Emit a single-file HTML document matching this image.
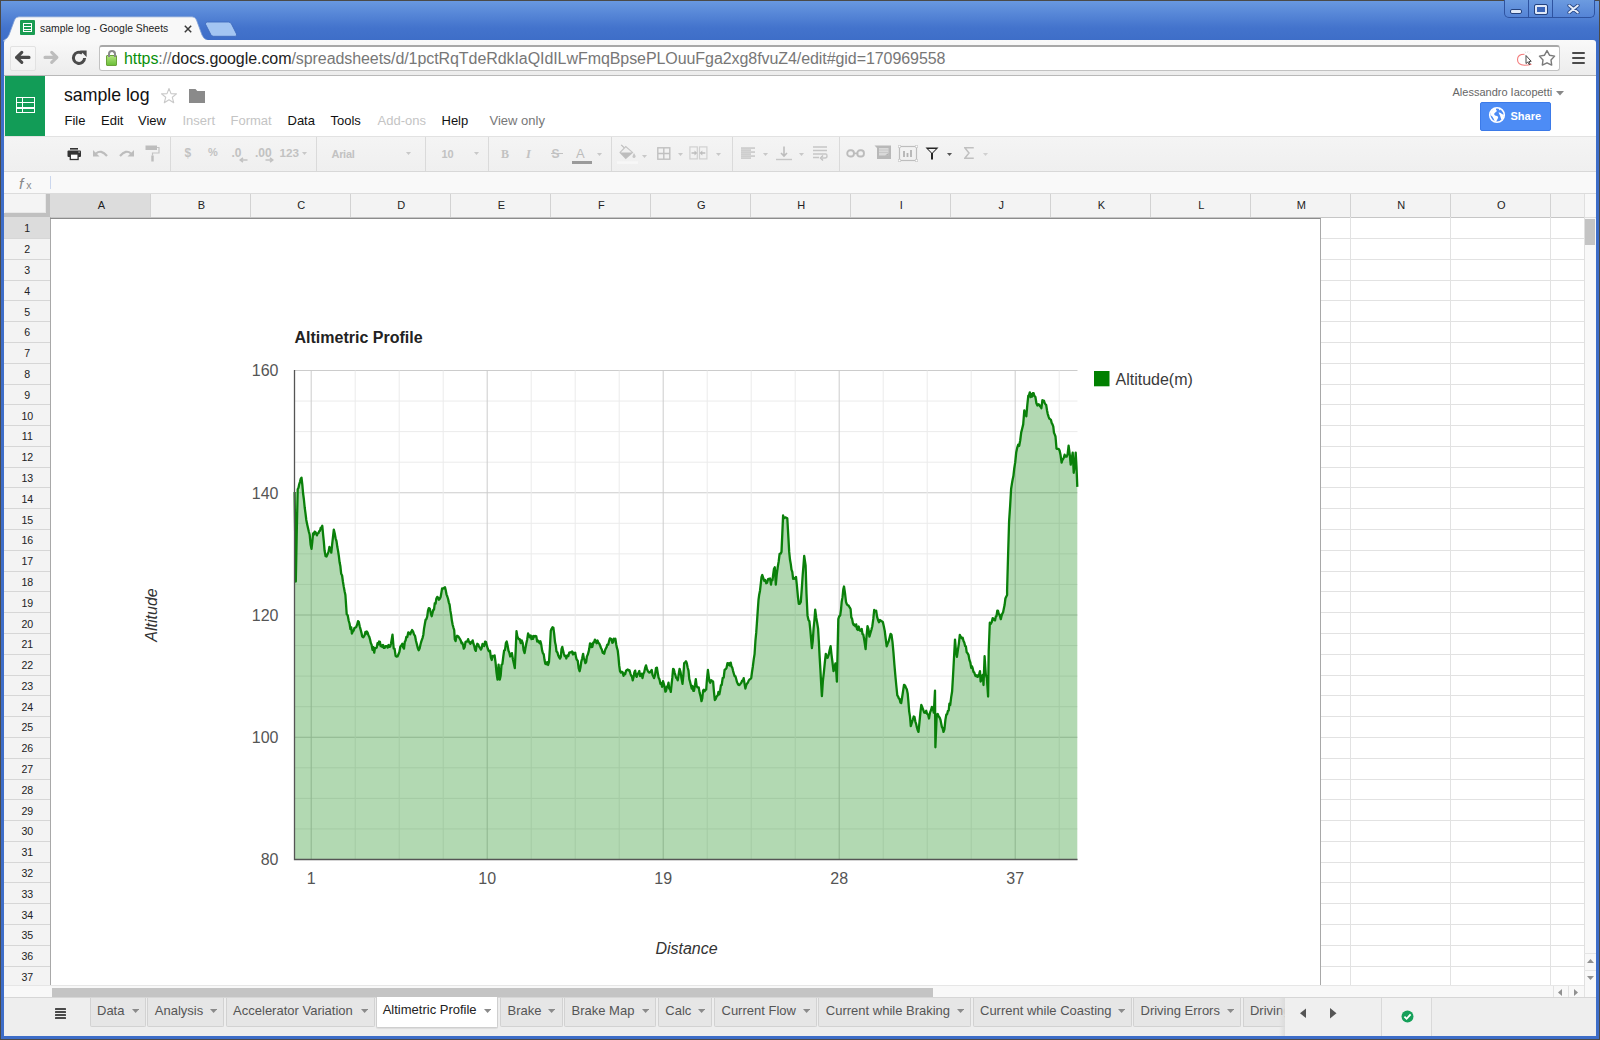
<!DOCTYPE html>
<html><head><meta charset="utf-8">
<style>
*{margin:0;padding:0;box-sizing:border-box}
html,body{width:1600px;height:1040px;overflow:hidden}
body{position:relative;background:#3d6dc8;font-family:"Liberation Sans",sans-serif;color:#222}
.a{position:absolute}
.t{position:absolute;white-space:nowrap;line-height:1}
</style></head><body>
<!-- window frame -->
<div class="a" style="left:0;top:0;width:1600px;height:40px;background:linear-gradient(#6a9ae2,#4373cc 70%,#3e6ec8)"></div>
<div class="a" style="left:0;top:0;width:1600px;height:1px;background:#4b4a48"></div>
<div class="a" style="left:0;top:0;width:1px;height:1040px;background:#4b4a48"></div>
<div class="a" style="left:1599px;top:0;width:1px;height:1040px;background:#4b4a48"></div>
<div class="a" style="left:0;top:1039px;width:1600px;height:1px;background:#4b4a48"></div>
<!-- window controls -->
<div class="a" style="left:1504px;top:0;width:91px;height:18px;border:1px solid #2e53a0;border-top:none;border-radius:0 0 5px 5px;background:linear-gradient(#6c9be0,#5584d6)"></div>
<div class="a" style="left:1528px;top:0;width:1px;height:17px;background:#2e53a0"></div>
<div class="a" style="left:1552px;top:0;width:1px;height:17px;background:#2e53a0"></div>
<div class="a" style="left:1510px;top:9px;width:12px;height:5px;background:#dfe8f7;border:1px solid #24427e;border-radius:2px"></div>
<div class="a" style="left:1534.5px;top:4.5px;width:12px;height:9px;border:2.5px solid #dfe8f7;outline:1px solid #24427e;background:#3a64b8;border-radius:1px"></div>
<svg class="a" style="left:1567px;top:4px" width="13" height="10" viewBox="0 0 13 10"><path d="M2.2 1.5 L10.8 8.5 M10.8 1.5 L2.2 8.5" stroke="#2a4a8a" stroke-width="3.6" stroke-linecap="round"/><path d="M2.2 1.5 L10.8 8.5 M10.8 1.5 L2.2 8.5" stroke="#e8eefa" stroke-width="2" stroke-linecap="round"/></svg>
<!-- tab -->
<svg class="a" style="left:0;top:0" width="250" height="42" viewBox="0 0 250 42">
<path d="M3 41 L5 39.5 Q7.5 38.5 9 35 L14.5 20 Q15.8 16.8 19 16.8 L192 16.8 Q195.2 16.8 196.5 20 L202 35 Q203.5 38.5 206 39.5 L209 41Z" fill="#f8f8f8" stroke="#7f9fd6" stroke-width="0.8"/>
<path d="M207.5 22 L228.5 22 Q230.5 22 231.5 24 L236.5 34 Q237.3 36.3 235 36.3 L213.5 36.3 Q211.5 36.3 210.7 34.3 L205.5 24.2 Q204.8 22 207.5 22Z" fill="#a3c5f2" stroke="#3f6bbd" stroke-width="0.9"/>
</svg>
<div class="a" style="left:20px;top:20px;width:15px;height:15px;background:#1a9c52;border-radius:1px"></div>
<div class="a" style="left:23px;top:23px;width:9px;height:9px;border:1px solid #fff;background:repeating-linear-gradient(#1a9c52 0 2px,#fff 2px 3px)"></div>
<div class="t" style="left:40px;top:24.3px;font-size:10.4px;color:#222">sample log - Google Sheets</div>
<svg class="a" style="left:184px;top:25px" width="8" height="8" viewBox="0 0 8 8"><path d="M0.8 0.8 L7.2 7.2 M7.2 0.8 L0.8 7.2" stroke="#3a3a3a" stroke-width="1.5"/></svg>
<!-- chrome toolbar -->
<div class="a" style="left:4px;top:40px;width:1592px;height:36px;background:linear-gradient(#f9f9f9,#ececec);border-radius:3px 3px 0 0"></div>
<div class="a" style="left:4px;top:75px;width:1592px;height:1px;background:#b9b9b9"></div>
<div class="a" style="left:10px;top:45.5px;width:25.5px;height:25px;border:1px solid #e2e2e2;border-radius:2px;background:rgba(255,255,255,0.25)"></div>
<svg class="a" style="left:12px;top:48px" width="22" height="20" viewBox="0 0 22 20"><path d="M4.5 9.4 H17 M9.8 4.4 L4.6 9.4 L9.8 14.4" stroke="#4a4a4a" stroke-width="3.1" fill="none" stroke-linecap="round" stroke-linejoin="round"/></svg>
<svg class="a" style="left:40px;top:48px" width="22" height="20" viewBox="0 0 22 20"><path d="M5 9.4 H16.5 M11.7 4.4 L16.9 9.4 L11.7 14.4" stroke="#bdbdbd" stroke-width="3.1" fill="none" stroke-linecap="round" stroke-linejoin="round"/></svg>
<svg class="a" style="left:68px;top:48px" width="22" height="20" viewBox="0 0 22 20"><path d="M16.6 10 A5.6 5.6 0 1 1 14.2 5.2" stroke="#4a4a4a" stroke-width="3" fill="none"/><path d="M12 2.5 L18.6 2.5 L18.6 9 Z" fill="#4a4a4a"/></svg>
<div class="a" style="left:98.5px;top:45px;width:1461.5px;height:26px;background:#fff;border:1px solid #c2c2c2;border-top:2px solid #a8a8a8;border-radius:3px"></div>
<div class="a" style="left:106px;top:55px;width:11px;height:10.5px;background:linear-gradient(#b0e27a,#6cc03a);border:1px solid #6aa23a;border-radius:1px"></div>
<div class="a" style="left:107.5px;top:50.3px;width:8px;height:7px;border:2px solid #8a8a8a;border-bottom:none;border-radius:4px 4px 0 0"></div>
<div class="t" style="left:124px;top:51.2px;font-size:16px;color:#777;letter-spacing:-0.07px"><span style="color:#0a8f0a">https</span><span style="color:#777">://</span><span style="color:#222">docs.google.com</span>/spreadsheets/d/1pctRqTdeRdkIaQIdILwFmqBpsePLOuuFga2xg8fvuZ4/edit#gid=170969558</div>
<svg class="a" style="left:1514px;top:50px" width="20" height="20" viewBox="0 0 20 20"><path d="M10.5 4.2 Q3.5 4.2 3.5 9.6 Q3.5 15.2 10.5 15.2 Q14.5 15.2 17.5 14.2" stroke="#f47c7c" stroke-width="1.1" fill="none"/><path d="M12 5.5 L12 13.5 L13.8 12 L15.2 14.6 L16.2 14.1 L14.9 11.5 L17.2 11.3Z" fill="#fff" stroke="#333" stroke-width="0.9" stroke-linejoin="round"/><path d="M11 1.5 L11.8 3 M14 1 L13.5 2.8 M16 2.5 L15 3.5" stroke="#ddd" stroke-width="0.7"/></svg>
<svg class="a" style="left:1537px;top:48px" width="20" height="20" viewBox="0 0 20 20"><path d="M10.00 2.60 L12.47 7.20 L17.61 8.13 L13.99 11.90 L14.70 17.07 L10.00 14.80 L5.30 17.07 L6.01 11.90 L2.39 8.13 L7.53 7.20Z" fill="#fff" stroke="#7a7a7a" stroke-width="1.4" stroke-linejoin="round"/></svg>
<div class="a" style="left:1572px;top:51.5px;width:13px;height:2.6px;background:#4a4a4a;border-radius:1px"></div>
<div class="a" style="left:1572px;top:56.5px;width:13px;height:2.6px;background:#4a4a4a;border-radius:1px"></div>
<div class="a" style="left:1572px;top:61.5px;width:13px;height:2.6px;background:#4a4a4a;border-radius:1px"></div>
<!-- main app area -->
<div class="a" style="left:4px;top:76px;width:1592px;height:959px;background:#fff"></div>
<!-- sheets header -->
<div class="a" style="left:4px;top:76px;width:1px;height:60px;background:#e8e8e8"></div>
<div class="a" style="left:5px;top:76px;width:39.5px;height:59.5px;background:#129c57"></div>
<div class="a" style="left:16px;top:97px;width:19px;height:16px;border:1.3px solid #fff"></div>
<div class="a" style="left:16px;top:102px;width:19px;height:1.3px;background:#fff"></div>
<div class="a" style="left:16px;top:107.3px;width:19px;height:1.3px;background:#fff"></div>
<div class="a" style="left:21.6px;top:97px;width:1.3px;height:16px;background:#fff"></div>
<div class="t" style="left:64px;top:86.8px;font-size:17.7px;color:#111">sample log</div>
<svg class="a" style="left:160px;top:87px" width="18" height="17" viewBox="0 0 18 17"><path d="M9 1.5 L11 6.6 L16.5 6.9 L12.3 10.3 L13.7 15.7 L9 12.7 L4.3 15.7 L5.7 10.3 L1.5 6.9 L7 6.6Z" fill="none" stroke="#c9c9c9" stroke-width="1.1" stroke-linejoin="round"/></svg>
<svg class="a" style="left:189px;top:89px" width="17" height="14" viewBox="0 0 17 14"><path d="M0 0 H6.5 L8.3 2 H16 V14 H0Z" fill="#8a8a8a"/></svg>
<div class="t" style="left:64.5px;top:113.5px;font-size:13px;color:#111">File</div>
<div class="t" style="left:101px;top:113.5px;font-size:13px;color:#111">Edit</div>
<div class="t" style="left:138px;top:113.5px;font-size:13px;color:#111">View</div>
<div class="t" style="left:182.5px;top:113.5px;font-size:13px;color:#c4c4c4">Insert</div>
<div class="t" style="left:230.5px;top:113.5px;font-size:13px;color:#c4c4c4">Format</div>
<div class="t" style="left:287.5px;top:113.5px;font-size:13px;color:#111">Data</div>
<div class="t" style="left:330.5px;top:113.5px;font-size:13px;color:#111">Tools</div>
<div class="t" style="left:377.5px;top:113.5px;font-size:13px;color:#c4c4c4">Add-ons</div>
<div class="t" style="left:441.5px;top:113.5px;font-size:13px;color:#111">Help</div>
<div class="t" style="left:489.5px;top:113.5px;font-size:13px;color:#777">View only</div>
<div class="t" style="left:1452.5px;top:86.5px;font-size:11px;color:#666">Alessandro Iacopetti</div>
<svg class="a" style="left:1556px;top:91px" width="8" height="5" viewBox="0 0 8 5"><path d="M0 0 H8 L4 4.5Z" fill="#888"/></svg>
<div class="a" style="left:1480px;top:102px;width:71px;height:28.5px;background:#4d8cf5;border:1px solid #3c7ae8;border-radius:2px"></div>
<svg class="a" style="left:1488px;top:106px" width="18" height="18" viewBox="0 0 18 18"><circle cx="9" cy="9" r="7.3" fill="none" stroke="#fff" stroke-width="1.6"/><path d="M2.5 6 Q5 4 6 2 L8 2 Q7.5 4 9 5 Q7 6.5 6 8 Q6.5 10 9 10 Q11 11 9.5 13 L8 16 Q6 15 5.5 12.5 Q5 10.5 2.5 9Z M11 2 Q13 3 12 4.5 L11 3.5Z M10.5 6.5 Q12.5 6 14 8 L16 9 Q15.5 12 13.5 14 Q12.5 11 12 9.5Z" fill="#fff"/></svg>
<div class="t" style="left:1510.5px;top:111.3px;font-size:11px;color:#fff;font-weight:bold">Share</div>
<div class="a" style="left:4px;top:135.5px;width:1592px;height:1px;background:#e2e2e2"></div>

<!-- toolbar -->
<div class="a" style="left:4px;top:136.5px;width:1592px;height:35px;background:linear-gradient(#f4f4f4,#efefef)"></div>
<div class="a" style="left:4px;top:171px;width:1592px;height:1px;background:#d8d8d8"></div>
<div class="a" style="left:170px;top:137px;width:1px;height:34px;background:#dadada"></div>
<div class="a" style="left:315.5px;top:137px;width:1px;height:34px;background:#dadada"></div>
<div class="a" style="left:425px;top:137px;width:1px;height:34px;background:#dadada"></div>
<div class="a" style="left:487.5px;top:137px;width:1px;height:34px;background:#dadada"></div>
<div class="a" style="left:610.5px;top:137px;width:1px;height:34px;background:#dadada"></div>
<div class="a" style="left:731.5px;top:137px;width:1px;height:34px;background:#dadada"></div>
<div class="a" style="left:838.5px;top:137px;width:1px;height:34px;background:#dadada"></div>
<!-- print -->
<svg class="a" style="left:67px;top:147px" width="15" height="14" viewBox="0 0 15 14"><rect x="3" y="1" width="8" height="1.6" fill="#333"/><rect x="0.5" y="3.5" width="13.5" height="6.5" rx="1" fill="#333"/><rect x="3.3" y="7" width="7.8" height="5.5" fill="#fff" stroke="#333" stroke-width="1.3"/><rect x="11.5" y="4.5" width="1.2" height="1.2" fill="#ddd"/></svg>
<!-- undo/redo -->
<svg class="a" style="left:92px;top:148px" width="17" height="10" viewBox="0 0 17 10"><path d="M4 5.5 Q9 1 15 8" stroke="#bdbdbd" stroke-width="2.2" fill="none"/><path d="M1 2 L1 8.5 L7.5 8.5Z" fill="#bdbdbd"/></svg>
<svg class="a" style="left:118px;top:148px" width="17" height="10" viewBox="0 0 17 10"><path d="M13 5.5 Q8 1 2 8" stroke="#bdbdbd" stroke-width="2.2" fill="none"/><path d="M16 2 L16 8.5 L9.5 8.5Z" fill="#bdbdbd"/></svg>
<!-- paint format -->
<svg class="a" style="left:145px;top:145px" width="16" height="17" viewBox="0 0 16 17"><rect x="0.5" y="0.5" width="11.5" height="4.5" fill="#bdbdbd"/><path d="M12 2.5 H14 V8 H7.5 V10.5" stroke="#c4c4c4" stroke-width="1.2" fill="none"/><rect x="6.3" y="10.5" width="2.4" height="6" fill="#bdbdbd"/></svg>
<div class="t" style="left:184.5px;top:147.4px;font-size:12px;font-weight:bold;color:#c2c2c2">$</div>
<div class="t" style="left:208px;top:147.4px;font-size:11px;font-weight:bold;color:#c2c2c2">%</div>
<div class="t" style="left:231.5px;top:147.4px;font-size:12px;font-weight:bold;color:#c2c2c2">.0</div>
<div class="t" style="left:255px;top:147.4px;font-size:12px;font-weight:bold;color:#c2c2c2">.00</div>
<svg class="a" style="left:239px;top:157px" width="9" height="6" viewBox="0 0 9 6"><path d="M8.5 3 H2 M4 0.8 L1.2 3 L4 5.2" stroke="#c2c2c2" stroke-width="1.5" fill="none"/></svg>
<svg class="a" style="left:265px;top:157px" width="9" height="6" viewBox="0 0 9 6"><path d="M0.5 3 H7 M5 0.8 L7.8 3 L5 5.2" stroke="#c2c2c2" stroke-width="1.5" fill="none"/></svg>
<div class="t" style="left:279.5px;top:147.4px;font-size:11.7px;font-weight:bold;color:#c2c2c2">123</div>
<svg class="a" style="left:301.5px;top:152px" width="5" height="3" viewBox="0 0 5 3"><path d="M0 0H5L2.5 3Z" fill="#c8c8c8"/></svg>
<div class="t" style="left:331.5px;top:148.6px;font-size:11px;font-weight:bold;color:#c2c2c2;letter-spacing:-0.3px">Arial</div>
<svg class="a" style="left:406px;top:152px" width="5" height="3" viewBox="0 0 5 3"><path d="M0 0H5L2.5 3Z" fill="#c8c8c8"/></svg>
<div class="t" style="left:441.5px;top:148.6px;font-size:11px;font-weight:bold;color:#c2c2c2">10</div>
<svg class="a" style="left:473.5px;top:152px" width="5" height="3" viewBox="0 0 5 3"><path d="M0 0H5L2.5 3Z" fill="#c8c8c8"/></svg>
<div class="t" style="left:501px;top:147.5px;font-size:12px;font-weight:bold;color:#c2c2c2;font-family:'Liberation Serif',serif">B</div>
<div class="t" style="left:526px;top:147.5px;font-size:12.5px;font-style:italic;color:#c2c2c2;font-family:'Liberation Serif',serif;font-weight:bold">I</div>
<div class="t" style="left:551.5px;top:147.5px;font-size:12px;font-weight:bold;color:#c2c2c2">S</div>
<div class="a" style="left:550.5px;top:152.5px;width:12px;height:1.2px;background:#c2c2c2"></div>
<div class="t" style="left:576px;top:147px;font-size:13px;color:#bcbcbc">A</div>
<div class="a" style="left:572px;top:160.5px;width:20px;height:3px;background:#9a9a9a"></div>
<svg class="a" style="left:596.5px;top:153px" width="5" height="3" viewBox="0 0 5 3"><path d="M0 0H5L2.5 3Z" fill="#c8c8c8"/></svg>
<!-- fill -->
<svg class="a" style="left:610px;top:140px" width="30" height="26" viewBox="0 0 30 26"><path d="M11.2 4.9 L17.2 10.6" stroke="#bdbdbd" stroke-width="1.3"/><path d="M10.1 12.4 L15.75 6.6 L22.5 12.4 L15.75 18.4Z" fill="#f0f0f0" stroke="#c4c4c4" stroke-width="1.2"/><path d="M10.1 12.4 L22.5 12.4 L15.75 18.4Z" fill="#bdbdbd"/><path d="M24 13 Q26 16 25.5 17 A1.6 1.6 0 0 1 22.5 17 Q22.3 16 24 13Z" fill="#c6c6c6"/><rect x="7" y="21.3" width="21" height="2.6" fill="#f7f7f7"/></svg>
<svg class="a" style="left:642px;top:155px" width="5" height="3" viewBox="0 0 5 3"><path d="M0 0H5L2.5 3Z" fill="#c8c8c8"/></svg>
<svg class="a" style="left:656.5px;top:146.5px" width="14" height="13" viewBox="0 0 14 13"><rect x="0.8" y="0.8" width="12" height="11.4" fill="none" stroke="#c0c0c0" stroke-width="1.4"/><path d="M6.8 1V12 M1 6.5H13" stroke="#c0c0c0" stroke-width="1.4"/></svg>
<svg class="a" style="left:678px;top:153px" width="5" height="3" viewBox="0 0 5 3"><path d="M0 0H5L2.5 3Z" fill="#c8c8c8"/></svg>
<svg class="a" style="left:689px;top:146px" width="19" height="14" viewBox="0 0 19 14"><rect x="0.9" y="0.9" width="7.4" height="12" fill="none" stroke="#d0d0d0" stroke-width="1.2"/><rect x="10.5" y="0.9" width="7.4" height="12" fill="none" stroke="#d0d0d0" stroke-width="1.2"/><path d="M2.5 7H6.5" stroke="#bdbdbd" stroke-width="1.5"/><path d="M5.5 4.6 L8.3 7 L5.5 9.4Z" fill="#bdbdbd"/><path d="M16.3 7H12.3" stroke="#bdbdbd" stroke-width="1.5"/><path d="M13.3 4.6 L10.5 7 L13.3 9.4Z" fill="#bdbdbd"/></svg>
<svg class="a" style="left:715.5px;top:153px" width="5" height="3" viewBox="0 0 5 3"><path d="M0 0H5L2.5 3Z" fill="#c8c8c8"/></svg>
<!-- align -->
<svg class="a" style="left:741px;top:147px" width="15" height="13" viewBox="0 0 15 13"><rect x="0" y="0.3" width="14" height="1.55" fill="#c8c8c8"/><rect x="0" y="2.3" width="10" height="1.55" fill="#c8c8c8"/><rect x="0" y="4.3" width="14" height="1.55" fill="#c8c8c8"/><rect x="0" y="6.3" width="10" height="1.55" fill="#c8c8c8"/><rect x="0" y="8.3" width="14" height="1.55" fill="#c8c8c8"/><rect x="0" y="10.3" width="10" height="1.55" fill="#c8c8c8"/></svg>
<svg class="a" style="left:763px;top:153px" width="5" height="3" viewBox="0 0 5 3"><path d="M0 0H5L2.5 3Z" fill="#c8c8c8"/></svg>
<svg class="a" style="left:775.5px;top:146px" width="16" height="15" viewBox="0 0 16 15"><path d="M8 0.5V10 M5 7 L8 10 L11 7" stroke="#bdbdbd" stroke-width="1.6" fill="none"/><path d="M0 13.5H16" stroke="#c6c6c6" stroke-width="1.4"/></svg>
<svg class="a" style="left:798.5px;top:153px" width="5" height="3" viewBox="0 0 5 3"><path d="M0 0H5L2.5 3Z" fill="#c8c8c8"/></svg>
<svg class="a" style="left:813px;top:146px" width="15" height="16" viewBox="0 0 15 16"><path d="M0 1H14 M0 4.5H14 M0 8H13 Q14 8 14 10 Q14 12 12 12 H9 M0 11.5H6" stroke="#c6c6c6" stroke-width="1.4" fill="none"/><path d="M10 9.5 L7.5 12 L10 14.5" stroke="#c0c0c0" stroke-width="1.4" fill="none"/></svg>
<!-- link, comment, chart, filter, sigma -->
<svg class="a" style="left:846px;top:148.5px" width="20" height="9" viewBox="0 0 20 9"><rect x="1.3" y="1.3" width="6.6" height="6.2" rx="2.8" fill="none" stroke="#bcbcbc" stroke-width="1.9"/><rect x="11.3" y="1.3" width="6.6" height="6.2" rx="2.8" fill="none" stroke="#bcbcbc" stroke-width="1.9"/><path d="M7 4.4H12.3" stroke="#bcbcbc" stroke-width="1.7"/></svg>
<svg class="a" style="left:873.5px;top:145px" width="18" height="15" viewBox="0 0 18 15"><path d="M0.5 0.5 H17 V14 H3 V3Z" fill="#b8b8b8"/><rect x="5" y="3" width="9.5" height="7.5" fill="#d9d9d9"/><path d="M5 5H14.5 M5 7.5H14.5" stroke="#c4c4c4" stroke-width="0.8"/><path d="M11 10.5 H14.5 L14.5 8Z" fill="#b0b0b0"/></svg>
<svg class="a" style="left:898px;top:144.5px" width="20" height="17" viewBox="0 0 20 17"><rect x="1.5" y="1.5" width="17" height="14" fill="none" stroke="#bdbdbd" stroke-width="1.2"/><circle cx="1.5" cy="1.5" r="1.3" fill="#fff" stroke="#bbb" stroke-width="0.8"/><circle cx="18.5" cy="1.5" r="1.3" fill="#fff" stroke="#bbb" stroke-width="0.8"/><circle cx="1.5" cy="15.5" r="1.3" fill="#fff" stroke="#bbb" stroke-width="0.8"/><circle cx="18.5" cy="15.5" r="1.3" fill="#fff" stroke="#bbb" stroke-width="0.8"/><path d="M6 6V12 M9.5 8V12 M13 5V12" stroke="#b3b3b3" stroke-width="1.8"/></svg>
<svg class="a" style="left:925px;top:147px" width="14" height="13" viewBox="0 0 14 13"><path d="M0.5 0.5 H13.5 L8 6 V12.5 H6 V6Z" fill="#262626"/><path d="M3.2 2 H10.8 L7 6" fill="#f2f2f2"/></svg>
<svg class="a" style="left:947px;top:153px" width="5" height="3" viewBox="0 0 5 3"><path d="M0 0H5L2.5 3Z" fill="#555"/></svg>
<svg class="a" style="left:963.5px;top:146.5px" width="10" height="12" viewBox="0 0 10 12"><path d="M9 1.5V0.8H0.8L5 6L0.8 11.2H9V10.5" stroke="#c0c0c0" stroke-width="1.5" fill="none"/></svg>
<svg class="a" style="left:983px;top:153px" width="5" height="3" viewBox="0 0 5 3"><path d="M0 0H5L2.5 3Z" fill="#d0d0d0"/></svg>
<!-- formula bar -->
<div class="a" style="left:4px;top:172px;width:1592px;height:21.5px;background:#f9f9f9"></div>
<div class="a" style="left:4px;top:193px;width:1592px;height:1px;background:#dcdcdc"></div>
<div class="t" style="left:19px;top:175.5px;font-size:15.5px;font-style:italic;color:#8a8a8a">f</div><div class="t" style="left:26.3px;top:180.3px;font-size:10.5px;color:#8a8a8a">x</div>
<div class="a" style="left:49.5px;top:176px;width:1px;height:13px;background:#cbd7ee"></div>

<div class="a" style="left:4px;top:193.5px;width:1580px;height:24px;background:#f3f3f3"></div>
<div class="a" style="left:50px;top:193.5px;width:100px;height:24px;background:#dcdcdc"></div>
<div class="a" style="left:150px;top:193.5px;width:1px;height:24px;background:#d2d2d2"></div>
<div class="a" style="left:250px;top:193.5px;width:1px;height:24px;background:#d2d2d2"></div>
<div class="a" style="left:350px;top:193.5px;width:1px;height:24px;background:#d2d2d2"></div>
<div class="a" style="left:450px;top:193.5px;width:1px;height:24px;background:#d2d2d2"></div>
<div class="a" style="left:550px;top:193.5px;width:1px;height:24px;background:#d2d2d2"></div>
<div class="a" style="left:650px;top:193.5px;width:1px;height:24px;background:#d2d2d2"></div>
<div class="a" style="left:750px;top:193.5px;width:1px;height:24px;background:#d2d2d2"></div>
<div class="a" style="left:850px;top:193.5px;width:1px;height:24px;background:#d2d2d2"></div>
<div class="a" style="left:950px;top:193.5px;width:1px;height:24px;background:#d2d2d2"></div>
<div class="a" style="left:1050px;top:193.5px;width:1px;height:24px;background:#d2d2d2"></div>
<div class="a" style="left:1150px;top:193.5px;width:1px;height:24px;background:#d2d2d2"></div>
<div class="a" style="left:1250px;top:193.5px;width:1px;height:24px;background:#d2d2d2"></div>
<div class="a" style="left:1350px;top:193.5px;width:1px;height:24px;background:#d2d2d2"></div>
<div class="a" style="left:1450px;top:193.5px;width:1px;height:24px;background:#d2d2d2"></div>
<div class="a" style="left:1550px;top:193.5px;width:1px;height:24px;background:#d2d2d2"></div>
<div class="t" style="left:71.3px;width:60px;text-align:center;top:200px;font-size:11px;color:#222">A</div>
<div class="t" style="left:171.3px;width:60px;text-align:center;top:200px;font-size:11px;color:#222">B</div>
<div class="t" style="left:271.3px;width:60px;text-align:center;top:200px;font-size:11px;color:#222">C</div>
<div class="t" style="left:371.3px;width:60px;text-align:center;top:200px;font-size:11px;color:#222">D</div>
<div class="t" style="left:471.3px;width:60px;text-align:center;top:200px;font-size:11px;color:#222">E</div>
<div class="t" style="left:571.3px;width:60px;text-align:center;top:200px;font-size:11px;color:#222">F</div>
<div class="t" style="left:671.3px;width:60px;text-align:center;top:200px;font-size:11px;color:#222">G</div>
<div class="t" style="left:771.3px;width:60px;text-align:center;top:200px;font-size:11px;color:#222">H</div>
<div class="t" style="left:871.3px;width:60px;text-align:center;top:200px;font-size:11px;color:#222">I</div>
<div class="t" style="left:971.3px;width:60px;text-align:center;top:200px;font-size:11px;color:#222">J</div>
<div class="t" style="left:1071.3px;width:60px;text-align:center;top:200px;font-size:11px;color:#222">K</div>
<div class="t" style="left:1171.3px;width:60px;text-align:center;top:200px;font-size:11px;color:#222">L</div>
<div class="t" style="left:1271.3px;width:60px;text-align:center;top:200px;font-size:11px;color:#222">M</div>
<div class="t" style="left:1371.3px;width:60px;text-align:center;top:200px;font-size:11px;color:#222">N</div>
<div class="t" style="left:1471.3px;width:60px;text-align:center;top:200px;font-size:11px;color:#222">O</div>
<div class="a" style="left:50px;top:216.8px;width:1534px;height:1px;background:#c6c6c6"></div>
<div class="a" style="left:4px;top:217px;width:45.5px;height:768px;background:#f3f3f3"></div>
<div class="a" style="left:5px;top:193.5px;width:41px;height:19.5px;background:#f4f4f4;border-right:1px solid #e8e8e8;border-bottom:1px solid #e8e8e8"></div>
<div class="a" style="left:45.8px;top:193.5px;width:4px;height:23.8px;background:#c0c0c0"></div>
<div class="a" style="left:4px;top:213px;width:46px;height:4.3px;background:#c0c0c0"></div>
<div class="a" style="left:4px;top:217.3px;width:45.5px;height:21.19px;background:#dcdcdc"></div>
<div class="a" style="left:4px;top:237.99px;width:45.5px;height:1px;background:#d6d6d6"></div>
<div class="a" style="left:1320px;top:237.99px;width:264px;height:1px;background:#e2e2e2"></div>
<div class="a" style="left:4px;top:258.78px;width:45.5px;height:1px;background:#d6d6d6"></div>
<div class="a" style="left:1320px;top:258.78px;width:264px;height:1px;background:#e2e2e2"></div>
<div class="a" style="left:4px;top:279.57px;width:45.5px;height:1px;background:#d6d6d6"></div>
<div class="a" style="left:1320px;top:279.57px;width:264px;height:1px;background:#e2e2e2"></div>
<div class="a" style="left:4px;top:300.36px;width:45.5px;height:1px;background:#d6d6d6"></div>
<div class="a" style="left:1320px;top:300.36px;width:264px;height:1px;background:#e2e2e2"></div>
<div class="a" style="left:4px;top:321.15px;width:45.5px;height:1px;background:#d6d6d6"></div>
<div class="a" style="left:1320px;top:321.15px;width:264px;height:1px;background:#e2e2e2"></div>
<div class="a" style="left:4px;top:341.94px;width:45.5px;height:1px;background:#d6d6d6"></div>
<div class="a" style="left:1320px;top:341.94px;width:264px;height:1px;background:#e2e2e2"></div>
<div class="a" style="left:4px;top:362.73px;width:45.5px;height:1px;background:#d6d6d6"></div>
<div class="a" style="left:1320px;top:362.73px;width:264px;height:1px;background:#e2e2e2"></div>
<div class="a" style="left:4px;top:383.52px;width:45.5px;height:1px;background:#d6d6d6"></div>
<div class="a" style="left:1320px;top:383.52px;width:264px;height:1px;background:#e2e2e2"></div>
<div class="a" style="left:4px;top:404.31px;width:45.5px;height:1px;background:#d6d6d6"></div>
<div class="a" style="left:1320px;top:404.31px;width:264px;height:1px;background:#e2e2e2"></div>
<div class="a" style="left:4px;top:425.10px;width:45.5px;height:1px;background:#d6d6d6"></div>
<div class="a" style="left:1320px;top:425.10px;width:264px;height:1px;background:#e2e2e2"></div>
<div class="a" style="left:4px;top:445.89px;width:45.5px;height:1px;background:#d6d6d6"></div>
<div class="a" style="left:1320px;top:445.89px;width:264px;height:1px;background:#e2e2e2"></div>
<div class="a" style="left:4px;top:466.68px;width:45.5px;height:1px;background:#d6d6d6"></div>
<div class="a" style="left:1320px;top:466.68px;width:264px;height:1px;background:#e2e2e2"></div>
<div class="a" style="left:4px;top:487.47px;width:45.5px;height:1px;background:#d6d6d6"></div>
<div class="a" style="left:1320px;top:487.47px;width:264px;height:1px;background:#e2e2e2"></div>
<div class="a" style="left:4px;top:508.26px;width:45.5px;height:1px;background:#d6d6d6"></div>
<div class="a" style="left:1320px;top:508.26px;width:264px;height:1px;background:#e2e2e2"></div>
<div class="a" style="left:4px;top:529.05px;width:45.5px;height:1px;background:#d6d6d6"></div>
<div class="a" style="left:1320px;top:529.05px;width:264px;height:1px;background:#e2e2e2"></div>
<div class="a" style="left:4px;top:549.84px;width:45.5px;height:1px;background:#d6d6d6"></div>
<div class="a" style="left:1320px;top:549.84px;width:264px;height:1px;background:#e2e2e2"></div>
<div class="a" style="left:4px;top:570.63px;width:45.5px;height:1px;background:#d6d6d6"></div>
<div class="a" style="left:1320px;top:570.63px;width:264px;height:1px;background:#e2e2e2"></div>
<div class="a" style="left:4px;top:591.42px;width:45.5px;height:1px;background:#d6d6d6"></div>
<div class="a" style="left:1320px;top:591.42px;width:264px;height:1px;background:#e2e2e2"></div>
<div class="a" style="left:4px;top:612.21px;width:45.5px;height:1px;background:#d6d6d6"></div>
<div class="a" style="left:1320px;top:612.21px;width:264px;height:1px;background:#e2e2e2"></div>
<div class="a" style="left:4px;top:633.00px;width:45.5px;height:1px;background:#d6d6d6"></div>
<div class="a" style="left:1320px;top:633.00px;width:264px;height:1px;background:#e2e2e2"></div>
<div class="a" style="left:4px;top:653.79px;width:45.5px;height:1px;background:#d6d6d6"></div>
<div class="a" style="left:1320px;top:653.79px;width:264px;height:1px;background:#e2e2e2"></div>
<div class="a" style="left:4px;top:674.58px;width:45.5px;height:1px;background:#d6d6d6"></div>
<div class="a" style="left:1320px;top:674.58px;width:264px;height:1px;background:#e2e2e2"></div>
<div class="a" style="left:4px;top:695.37px;width:45.5px;height:1px;background:#d6d6d6"></div>
<div class="a" style="left:1320px;top:695.37px;width:264px;height:1px;background:#e2e2e2"></div>
<div class="a" style="left:4px;top:716.16px;width:45.5px;height:1px;background:#d6d6d6"></div>
<div class="a" style="left:1320px;top:716.16px;width:264px;height:1px;background:#e2e2e2"></div>
<div class="a" style="left:4px;top:736.95px;width:45.5px;height:1px;background:#d6d6d6"></div>
<div class="a" style="left:1320px;top:736.95px;width:264px;height:1px;background:#e2e2e2"></div>
<div class="a" style="left:4px;top:757.74px;width:45.5px;height:1px;background:#d6d6d6"></div>
<div class="a" style="left:1320px;top:757.74px;width:264px;height:1px;background:#e2e2e2"></div>
<div class="a" style="left:4px;top:778.53px;width:45.5px;height:1px;background:#d6d6d6"></div>
<div class="a" style="left:1320px;top:778.53px;width:264px;height:1px;background:#e2e2e2"></div>
<div class="a" style="left:4px;top:799.32px;width:45.5px;height:1px;background:#d6d6d6"></div>
<div class="a" style="left:1320px;top:799.32px;width:264px;height:1px;background:#e2e2e2"></div>
<div class="a" style="left:4px;top:820.11px;width:45.5px;height:1px;background:#d6d6d6"></div>
<div class="a" style="left:1320px;top:820.11px;width:264px;height:1px;background:#e2e2e2"></div>
<div class="a" style="left:4px;top:840.90px;width:45.5px;height:1px;background:#d6d6d6"></div>
<div class="a" style="left:1320px;top:840.90px;width:264px;height:1px;background:#e2e2e2"></div>
<div class="a" style="left:4px;top:861.69px;width:45.5px;height:1px;background:#d6d6d6"></div>
<div class="a" style="left:1320px;top:861.69px;width:264px;height:1px;background:#e2e2e2"></div>
<div class="a" style="left:4px;top:882.48px;width:45.5px;height:1px;background:#d6d6d6"></div>
<div class="a" style="left:1320px;top:882.48px;width:264px;height:1px;background:#e2e2e2"></div>
<div class="a" style="left:4px;top:903.27px;width:45.5px;height:1px;background:#d6d6d6"></div>
<div class="a" style="left:1320px;top:903.27px;width:264px;height:1px;background:#e2e2e2"></div>
<div class="a" style="left:4px;top:924.06px;width:45.5px;height:1px;background:#d6d6d6"></div>
<div class="a" style="left:1320px;top:924.06px;width:264px;height:1px;background:#e2e2e2"></div>
<div class="a" style="left:4px;top:944.85px;width:45.5px;height:1px;background:#d6d6d6"></div>
<div class="a" style="left:1320px;top:944.85px;width:264px;height:1px;background:#e2e2e2"></div>
<div class="a" style="left:4px;top:965.64px;width:45.5px;height:1px;background:#d6d6d6"></div>
<div class="a" style="left:1320px;top:965.64px;width:264px;height:1px;background:#e2e2e2"></div>
<div class="a" style="left:4px;top:986.43px;width:45.5px;height:1px;background:#d6d6d6"></div>
<div class="a" style="left:1320px;top:986.43px;width:264px;height:1px;background:#e2e2e2"></div>
<div class="t" style="left:4.3px;width:46px;text-align:center;top:223.49px;font-size:10.6px;color:#222">1</div>
<div class="t" style="left:4.3px;width:46px;text-align:center;top:244.28px;font-size:10.6px;color:#222">2</div>
<div class="t" style="left:4.3px;width:46px;text-align:center;top:265.07px;font-size:10.6px;color:#222">3</div>
<div class="t" style="left:4.3px;width:46px;text-align:center;top:285.87px;font-size:10.6px;color:#222">4</div>
<div class="t" style="left:4.3px;width:46px;text-align:center;top:306.65px;font-size:10.6px;color:#222">5</div>
<div class="t" style="left:4.3px;width:46px;text-align:center;top:327.44px;font-size:10.6px;color:#222">6</div>
<div class="t" style="left:4.3px;width:46px;text-align:center;top:348.24px;font-size:10.6px;color:#222">7</div>
<div class="t" style="left:4.3px;width:46px;text-align:center;top:369.02px;font-size:10.6px;color:#222">8</div>
<div class="t" style="left:4.3px;width:46px;text-align:center;top:389.81px;font-size:10.6px;color:#222">9</div>
<div class="t" style="left:4.3px;width:46px;text-align:center;top:410.60px;font-size:10.6px;color:#222">10</div>
<div class="t" style="left:4.3px;width:46px;text-align:center;top:431.39px;font-size:10.6px;color:#222">11</div>
<div class="t" style="left:4.3px;width:46px;text-align:center;top:452.18px;font-size:10.6px;color:#222">12</div>
<div class="t" style="left:4.3px;width:46px;text-align:center;top:472.97px;font-size:10.6px;color:#222">13</div>
<div class="t" style="left:4.3px;width:46px;text-align:center;top:493.76px;font-size:10.6px;color:#222">14</div>
<div class="t" style="left:4.3px;width:46px;text-align:center;top:514.55px;font-size:10.6px;color:#222">15</div>
<div class="t" style="left:4.3px;width:46px;text-align:center;top:535.34px;font-size:10.6px;color:#222">16</div>
<div class="t" style="left:4.3px;width:46px;text-align:center;top:556.13px;font-size:10.6px;color:#222">17</div>
<div class="t" style="left:4.3px;width:46px;text-align:center;top:576.92px;font-size:10.6px;color:#222">18</div>
<div class="t" style="left:4.3px;width:46px;text-align:center;top:597.72px;font-size:10.6px;color:#222">19</div>
<div class="t" style="left:4.3px;width:46px;text-align:center;top:618.50px;font-size:10.6px;color:#222">20</div>
<div class="t" style="left:4.3px;width:46px;text-align:center;top:639.29px;font-size:10.6px;color:#222">21</div>
<div class="t" style="left:4.3px;width:46px;text-align:center;top:660.08px;font-size:10.6px;color:#222">22</div>
<div class="t" style="left:4.3px;width:46px;text-align:center;top:680.87px;font-size:10.6px;color:#222">23</div>
<div class="t" style="left:4.3px;width:46px;text-align:center;top:701.66px;font-size:10.6px;color:#222">24</div>
<div class="t" style="left:4.3px;width:46px;text-align:center;top:722.46px;font-size:10.6px;color:#222">25</div>
<div class="t" style="left:4.3px;width:46px;text-align:center;top:743.25px;font-size:10.6px;color:#222">26</div>
<div class="t" style="left:4.3px;width:46px;text-align:center;top:764.03px;font-size:10.6px;color:#222">27</div>
<div class="t" style="left:4.3px;width:46px;text-align:center;top:784.82px;font-size:10.6px;color:#222">28</div>
<div class="t" style="left:4.3px;width:46px;text-align:center;top:805.61px;font-size:10.6px;color:#222">29</div>
<div class="t" style="left:4.3px;width:46px;text-align:center;top:826.40px;font-size:10.6px;color:#222">30</div>
<div class="t" style="left:4.3px;width:46px;text-align:center;top:847.19px;font-size:10.6px;color:#222">31</div>
<div class="t" style="left:4.3px;width:46px;text-align:center;top:867.99px;font-size:10.6px;color:#222">32</div>
<div class="t" style="left:4.3px;width:46px;text-align:center;top:888.77px;font-size:10.6px;color:#222">33</div>
<div class="t" style="left:4.3px;width:46px;text-align:center;top:909.56px;font-size:10.6px;color:#222">34</div>
<div class="t" style="left:4.3px;width:46px;text-align:center;top:930.35px;font-size:10.6px;color:#222">35</div>
<div class="t" style="left:4.3px;width:46px;text-align:center;top:951.14px;font-size:10.6px;color:#222">36</div>
<div class="t" style="left:4.3px;width:46px;text-align:center;top:971.93px;font-size:10.6px;color:#222">37</div>
<div class="a" style="left:1350px;top:217.3px;width:1px;height:768px;background:#e2e2e2"></div>
<div class="a" style="left:1450px;top:217.3px;width:1px;height:768px;background:#e2e2e2"></div>
<div class="a" style="left:1550px;top:217.3px;width:1px;height:768px;background:#e2e2e2"></div>
<div class="a" style="left:49.8px;top:217px;width:1.6px;height:768px;background:#b5b5b5"></div>
<div class="a" style="left:1583.5px;top:193.5px;width:12.5px;height:804px;background:#f8f8f8;border-left:1px solid #e0e0e0"></div>
<div class="a" style="left:1583.5px;top:217px;width:12.5px;height:1px;background:#dedede"></div>
<div class="a" style="left:1585px;top:219px;width:9.5px;height:25.5px;background:#c4c4c4"></div>
<div class="a" style="left:1583.5px;top:953px;width:12.5px;height:1px;background:#e4e4e4"></div>
<div class="a" style="left:1583.5px;top:969.5px;width:12.5px;height:1px;background:#e4e4e4"></div>
<svg class="a" style="left:1586.5px;top:959px" width="7" height="4" viewBox="0 0 7 4"><path d="M0 4H7L3.5 0Z" fill="#909090"/></svg>
<svg class="a" style="left:1586.5px;top:976px" width="7" height="4" viewBox="0 0 7 4"><path d="M0 0H7L3.5 4Z" fill="#909090"/></svg>
<div class="a" style="left:4px;top:985px;width:1580px;height:12px;background:#f8f8f8;border-top:1px solid #e6e6e6"></div>
<div class="a" style="left:52px;top:987.5px;width:881px;height:9px;background:#c4c4c4"></div>
<div class="a" style="left:1552.5px;top:986px;width:1px;height:11px;background:#e2e2e2"></div>
<div class="a" style="left:1568px;top:986px;width:1px;height:11px;background:#e2e2e2"></div>
<div class="a" style="left:1583.5px;top:986px;width:1px;height:11px;background:#e2e2e2"></div>
<svg class="a" style="left:1558px;top:989px" width="4" height="7" viewBox="0 0 4 7"><path d="M4 0V7L0 3.5Z" fill="#909090"/></svg>
<svg class="a" style="left:1574px;top:989px" width="4" height="7" viewBox="0 0 4 7"><path d="M0 0V7L4 3.5Z" fill="#909090"/></svg>
<svg class="a" style="left:0;top:0" width="1600" height="985" viewBox="0 0 1600 985">
<rect x="50.5" y="218.5" width="1270" height="800" fill="#fff" stroke="#a8a8a8" stroke-width="1"/>
<path d="M50 218.5 H1320.5" stroke="#8c8c8c" stroke-width="1.2"/>
<path d="M294.5 370.50 H1077.5" stroke="#cccccc" stroke-width="1"/>
<path d="M294.5 401.06 H1077.5" stroke="#ebebeb" stroke-width="1"/>
<path d="M294.5 431.62 H1077.5" stroke="#ebebeb" stroke-width="1"/>
<path d="M294.5 462.19 H1077.5" stroke="#ebebeb" stroke-width="1"/>
<path d="M294.5 492.75 H1077.5" stroke="#cccccc" stroke-width="1"/>
<path d="M294.5 523.31 H1077.5" stroke="#ebebeb" stroke-width="1"/>
<path d="M294.5 553.88 H1077.5" stroke="#ebebeb" stroke-width="1"/>
<path d="M294.5 584.44 H1077.5" stroke="#ebebeb" stroke-width="1"/>
<path d="M294.5 615.00 H1077.5" stroke="#cccccc" stroke-width="1"/>
<path d="M294.5 645.56 H1077.5" stroke="#ebebeb" stroke-width="1"/>
<path d="M294.5 676.12 H1077.5" stroke="#ebebeb" stroke-width="1"/>
<path d="M294.5 706.69 H1077.5" stroke="#ebebeb" stroke-width="1"/>
<path d="M294.5 737.25 H1077.5" stroke="#cccccc" stroke-width="1"/>
<path d="M294.5 767.81 H1077.5" stroke="#ebebeb" stroke-width="1"/>
<path d="M294.5 798.38 H1077.5" stroke="#ebebeb" stroke-width="1"/>
<path d="M294.5 828.94 H1077.5" stroke="#ebebeb" stroke-width="1"/>
<path d="M294.5 859.50 H1077.5" stroke="#cccccc" stroke-width="1"/>
<path d="M311.20 370.5 V859.5" stroke="#cccccc" stroke-width="1"/>
<path d="M355.20 370.5 V859.5" stroke="#ebebeb" stroke-width="1"/>
<path d="M399.20 370.5 V859.5" stroke="#ebebeb" stroke-width="1"/>
<path d="M443.20 370.5 V859.5" stroke="#ebebeb" stroke-width="1"/>
<path d="M487.20 370.5 V859.5" stroke="#cccccc" stroke-width="1"/>
<path d="M531.20 370.5 V859.5" stroke="#ebebeb" stroke-width="1"/>
<path d="M575.20 370.5 V859.5" stroke="#ebebeb" stroke-width="1"/>
<path d="M619.20 370.5 V859.5" stroke="#ebebeb" stroke-width="1"/>
<path d="M663.20 370.5 V859.5" stroke="#cccccc" stroke-width="1"/>
<path d="M707.20 370.5 V859.5" stroke="#ebebeb" stroke-width="1"/>
<path d="M751.20 370.5 V859.5" stroke="#ebebeb" stroke-width="1"/>
<path d="M795.20 370.5 V859.5" stroke="#ebebeb" stroke-width="1"/>
<path d="M839.20 370.5 V859.5" stroke="#cccccc" stroke-width="1"/>
<path d="M883.20 370.5 V859.5" stroke="#ebebeb" stroke-width="1"/>
<path d="M927.20 370.5 V859.5" stroke="#ebebeb" stroke-width="1"/>
<path d="M971.20 370.5 V859.5" stroke="#ebebeb" stroke-width="1"/>
<path d="M1015.20 370.5 V859.5" stroke="#cccccc" stroke-width="1"/>
<path d="M1059.20 370.5 V859.5" stroke="#ebebeb" stroke-width="1"/>
<path d="M294.6 492.1 L295.8 581.5 L296.7 535.0 L297.7 489.2 L298.5 487.7 L299.2 484.3 L300.0 481.8 L300.8 478.6 L301.5 477.7 L302.3 484.4 L303.1 493.5 L303.9 499.5 L304.7 507.5 L305.5 513.3 L306.3 520.0 L307.2 524.4 L308.0 528.0 L308.8 531.5 L309.7 534.8 L310.6 544.4 L311.5 548.8 L312.3 541.9 L313.1 533.5 L313.8 534.6 L314.6 531.7 L315.4 532.0 L316.2 533.7 L316.9 535.4 L317.7 533.3 L318.5 533.1 L319.2 531.2 L320.0 530.7 L320.8 527.6 L321.5 527.6 L322.3 525.8 L323.1 534.7 L323.8 541.4 L324.6 550.8 L325.6 556.2 L326.5 556.5 L327.5 554.2 L328.5 551.9 L329.4 546.9 L330.4 548.9 L331.3 552.7 L332.2 543.9 L333.0 536.8 L333.8 529.6 L334.7 533.3 L335.6 538.3 L336.5 541.2 L337.3 546.8 L338.1 551.1 L338.8 555.6 L339.6 562.3 L340.4 566.3 L341.2 573.8 L342.1 575.5 L342.9 581.5 L343.7 586.4 L344.6 591.2 L345.4 595.0 L346.7 614.2 L347.7 615.2 L348.7 620.7 L349.6 623.8 L350.4 629.0 L351.2 627.2 L351.9 633.5 L352.8 631.5 L353.7 630.4 L354.5 627.9 L355.4 627.7 L356.2 627.0 L357.1 624.7 L358.0 621.2 L358.8 621.9 L359.7 626.2 L360.5 629.1 L361.4 632.6 L362.2 636.4 L363.1 637.3 L363.8 636.7 L364.6 635.2 L365.4 631.9 L366.2 633.6 L366.9 631.5 L367.7 632.9 L368.5 635.5 L369.2 636.6 L370.0 639.3 L370.8 643.1 L371.6 644.7 L372.5 649.8 L373.4 647.2 L374.2 652.7 L375.0 648.1 L375.9 648.2 L376.7 647.6 L377.5 643.1 L378.3 644.6 L379.1 641.5 L379.9 641.8 L380.7 646.2 L381.5 645.2 L382.3 646.9 L383.1 645.0 L383.8 647.9 L384.6 647.9 L385.4 646.2 L386.2 646.1 L386.9 646.1 L387.7 647.6 L388.5 645.0 L389.3 646.8 L390.2 646.7 L391.0 643.5 L391.7 639.5 L392.5 634.6 L393.7 648.5 L394.6 648.8 L395.6 655.8 L396.5 656.5 L397.5 656.4 L398.5 654.3 L399.4 651.9 L400.4 646.3 L401.3 645.6 L402.3 643.8 L403.2 647.4 L404.0 648.5 L404.8 641.9 L405.6 640.5 L406.3 636.9 L407.3 637.1 L408.3 632.3 L409.2 632.9 L410.2 634.3 L411.2 631.8 L412.1 630.0 L413.1 631.7 L414.0 634.3 L415.0 635.8 L416.0 641.0 L416.9 644.4 L417.9 648.5 L418.7 650.2 L419.6 648.5 L420.6 644.0 L421.5 640.9 L422.5 638.1 L423.3 635.0 L424.0 628.9 L424.8 624.2 L425.6 619.7 L426.4 619.2 L427.2 616.7 L428.0 610.6 L428.8 608.1 L429.8 608.7 L430.8 613.3 L431.7 616.2 L432.5 613.0 L433.3 609.9 L434.0 609.6 L434.8 603.1 L435.6 603.6 L436.3 598.8 L437.2 596.9 L438.1 597.7 L438.9 599.8 L439.8 598.8 L440.6 597.1 L441.3 593.2 L442.1 588.5 L443.1 588.6 L444.0 587.9 L445.0 587.3 L445.8 590.6 L446.5 594.3 L447.3 596.5 L448.1 599.0 L448.8 602.3 L449.6 604.6 L450.4 610.9 L451.2 615.4 L451.9 620.8 L452.7 625.0 L453.5 627.8 L454.2 630.0 L454.8 639.2 L455.6 641.1 L456.3 637.4 L457.1 635.8 L458.1 636.3 L459.0 637.5 L460.0 639.2 L460.8 640.6 L461.5 643.3 L462.3 642.8 L463.1 645.2 L463.8 648.7 L464.6 647.3 L465.5 642.1 L466.3 641.6 L467.2 641.6 L468.1 639.2 L468.8 641.4 L469.6 642.7 L470.4 643.8 L471.2 642.0 L471.9 642.5 L472.7 640.4 L473.5 643.9 L474.2 645.8 L475.0 649.6 L475.8 650.9 L476.5 646.3 L477.3 643.8 L478.2 644.5 L479.0 646.6 L479.9 647.8 L480.8 649.6 L481.6 648.3 L482.5 643.9 L483.4 645.1 L484.2 646.1 L485.1 641.6 L486.0 642.1 L486.8 645.2 L487.7 648.5 L488.5 650.7 L489.2 651.3 L490.0 650.8 L490.9 657.6 L491.7 660.0 L492.7 655.9 L493.6 656.4 L494.6 655.4 L495.6 662.9 L496.5 672.5 L497.5 679.6 L498.6 664.6 L499.8 679.6 L500.7 675.5 L501.5 664.9 L502.4 663.9 L503.3 656.5 L504.1 650.6 L505.0 650.1 L505.9 643.0 L506.7 641.5 L507.6 645.5 L508.5 650.8 L509.3 652.6 L510.2 656.5 L511.1 655.1 L511.9 653.1 L512.9 659.3 L513.8 663.3 L514.8 668.1 L515.7 649.5 L516.5 631.2 L517.3 636.1 L518.1 638.1 L518.8 639.2 L519.8 639.2 L520.8 643.2 L521.7 640.4 L522.7 642.9 L523.6 650.2 L524.6 653.1 L525.5 647.8 L526.3 643.5 L527.2 639.4 L528.1 633.5 L528.9 635.2 L529.8 637.3 L530.7 635.5 L531.5 639.2 L532.3 636.3 L533.1 638.8 L533.8 635.8 L534.6 636.5 L535.5 636.0 L536.3 636.4 L537.2 641.5 L538.1 640.6 L538.8 641.9 L539.6 643.2 L540.4 641.2 L541.2 644.4 L542.1 650.4 L542.9 653.2 L543.7 654.2 L544.5 659.8 L545.3 663.8 L546.2 664.2 L547.1 662.1 L548.1 665.0 L549.0 661.9 L549.9 647.8 L550.8 630.8 L551.6 628.8 L552.5 627.3 L553.4 627.8 L554.2 634.2 L555.0 642.1 L555.8 645.6 L556.5 651.5 L557.4 652.4 L558.3 655.6 L559.1 657.3 L560.0 658.5 L560.8 656.9 L561.5 649.2 L562.3 646.9 L563.1 650.9 L563.9 653.8 L564.7 656.0 L565.5 655.9 L566.3 658.5 L567.3 655.4 L568.3 656.1 L569.2 652.7 L570.2 652.5 L571.2 652.1 L572.1 651.5 L572.9 654.4 L573.7 652.7 L574.4 653.8 L575.2 652.6 L576.0 657.1 L576.7 659.6 L577.7 660.7 L578.7 668.5 L579.6 671.2 L580.5 667.3 L581.3 661.6 L582.2 658.2 L583.1 653.8 L583.8 658.2 L584.6 660.1 L585.4 663.1 L586.2 661.8 L586.9 656.4 L587.7 654.8 L588.5 652.2 L589.2 649.1 L590.0 643.5 L590.8 643.6 L591.5 647.1 L592.3 646.9 L593.2 642.7 L594.0 642.4 L594.9 639.7 L595.8 641.2 L596.6 643.3 L597.5 640.5 L598.4 642.9 L599.2 643.5 L600.1 645.5 L601.0 648.0 L601.8 649.5 L602.7 652.7 L603.5 652.3 L604.2 653.8 L605.0 650.4 L605.8 648.5 L606.5 647.3 L607.3 644.6 L608.2 644.7 L609.0 641.4 L609.9 638.4 L610.8 638.8 L611.5 639.2 L612.3 642.8 L613.1 642.3 L613.8 638.7 L614.6 639.1 L615.4 638.8 L616.2 644.2 L616.9 647.7 L617.7 650.4 L618.5 657.3 L619.2 665.4 L620.0 671.2 L620.9 672.6 L621.7 671.7 L622.6 672.3 L623.5 675.8 L624.3 673.4 L625.2 674.3 L626.1 670.6 L626.9 670.0 L627.8 669.5 L628.7 670.6 L629.5 670.3 L630.4 673.5 L631.1 675.6 L631.9 676.3 L632.7 680.4 L633.6 676.9 L634.4 672.3 L635.2 670.6 L636.0 675.9 L636.7 676.9 L637.6 673.9 L638.5 672.9 L639.3 671.0 L640.1 676.0 L640.9 675.6 L641.7 673.8 L642.5 678.1 L643.4 673.6 L644.2 672.2 L645.1 667.9 L646.0 665.4 L646.9 668.9 L647.9 671.1 L648.8 672.3 L649.8 672.5 L650.8 671.3 L651.7 670.0 L652.5 674.7 L653.3 676.4 L654.0 678.1 L655.0 675.3 L656.0 668.0 L656.9 667.7 L657.8 673.1 L658.6 677.7 L659.5 679.4 L660.4 683.8 L661.2 683.1 L662.1 686.8 L663.0 681.2 L663.8 683.8 L664.6 686.9 L665.4 691.7 L666.1 690.8 L666.9 686.7 L667.7 686.4 L668.5 682.7 L669.2 688.6 L670.0 688.7 L670.8 691.9 L671.5 685.1 L672.3 677.9 L673.1 668.8 L673.8 669.4 L674.6 672.6 L675.4 675.1 L676.1 677.8 L676.9 678.4 L677.7 680.4 L678.7 674.3 L679.6 668.8 L680.6 672.3 L681.5 678.3 L682.5 683.8 L683.4 674.8 L684.2 663.1 L685.1 662.4 L686.0 661.3 L686.8 663.2 L687.7 667.7 L688.5 670.6 L689.3 679.2 L690.1 681.9 L690.9 685.3 L691.7 688.5 L692.5 686.0 L693.3 690.9 L694.0 690.8 L694.9 685.7 L695.8 679.2 L696.6 685.8 L697.5 687.3 L698.7 687.3 L699.6 692.6 L700.6 696.4 L701.5 701.2 L702.3 698.1 L703.1 690.5 L703.8 689.6 L704.6 691.2 L705.4 690.1 L706.2 689.6 L707.0 678.8 L707.9 670.0 L708.7 676.2 L709.4 681.2 L710.2 682.7 L711.2 680.2 L712.1 680.9 L713.1 681.5 L713.9 691.2 L714.8 700.0 L715.8 698.7 L716.7 696.3 L717.7 695.4 L718.5 691.8 L719.3 694.4 L720.1 690.7 L720.9 685.3 L721.7 685.0 L722.7 678.0 L723.7 677.6 L724.6 670.0 L725.6 669.2 L726.5 668.1 L727.5 663.1 L728.3 665.0 L729.1 663.2 L729.9 665.5 L730.7 662.6 L731.5 666.5 L732.3 667.7 L733.1 671.1 L733.8 673.5 L734.6 676.2 L735.4 676.2 L736.2 679.0 L736.9 681.8 L737.7 683.6 L738.5 685.0 L739.4 685.2 L740.4 683.8 L741.3 682.7 L742.1 680.7 L742.9 680.8 L743.7 678.1 L744.5 683.3 L745.4 688.5 L746.2 685.2 L747.1 683.5 L748.0 682.4 L748.8 680.4 L749.6 679.4 L750.4 679.1 L751.2 678.1 L752.0 672.0 L752.9 666.2 L753.7 659.7 L754.6 653.8 L754.6 653.8 L755.4 641.2 L756.2 632.9 L756.9 623.1 L757.7 611.4 L758.5 600.0 L759.2 594.7 L760.0 590.7 L760.8 583.6 L761.5 577.2 L762.3 575.0 L763.3 578.0 L764.2 580.8 L765.2 580.0 L766.2 583.2 L767.1 582.7 L768.1 579.1 L769.0 578.8 L770.0 578.5 L771.0 584.6 L771.7 579.6 L772.5 580.1 L773.3 573.7 L774.0 568.7 L774.8 567.3 L775.8 584.6 L776.7 574.8 L777.7 567.3 L778.7 561.4 L779.6 553.8 L780.6 553.6 L781.5 551.9 L782.3 533.9 L783.1 515.4 L783.8 518.3 L784.6 517.7 L785.4 517.3 L786.3 517.8 L787.3 518.3 L788.3 536.0 L789.2 551.9 L790.0 559.8 L790.8 564.1 L791.5 569.6 L792.3 571.8 L793.1 578.8 L794.0 578.0 L795.0 578.7 L796.0 576.9 L796.9 585.5 L797.9 596.5 L798.8 603.8 L799.8 603.8 L800.8 601.9 L801.7 589.8 L802.7 575.0 L803.5 565.1 L804.2 555.8 L805.6 565.4 L806.5 593.6 L807.5 615.4 L808.5 620.1 L809.4 621.2 L810.3 629.8 L811.1 639.2 L811.9 648.1 L812.7 641.7 L813.6 628.3 L814.4 620.5 L815.2 609.6 L816.2 617.5 L817.1 622.4 L818.1 628.8 L818.8 640.6 L819.6 656.1 L820.4 669.8 L821.2 684.4 L821.9 696.2 L822.9 680.8 L823.8 673.0 L824.8 662.9 L825.8 653.8 L826.7 657.0 L827.7 657.7 L828.7 654.7 L829.6 650.3 L830.6 646.2 L831.5 654.6 L832.5 662.5 L833.5 671.2 L834.4 668.3 L835.4 663.5 L836.2 671.0 L836.9 681.7 L838.3 619.2 L839.2 616.4 L840.2 615.4 L841.0 609.6 L841.7 601.7 L842.5 597.4 L843.3 589.3 L844.0 586.5 L845.0 593.2 L846.0 601.9 L846.7 603.9 L847.5 605.1 L848.3 605.3 L849.0 606.2 L849.8 607.7 L850.6 609.0 L851.3 617.4 L852.1 618.9 L852.9 623.2 L853.7 625.0 L854.5 624.4 L855.3 626.2 L856.2 624.4 L857.0 629.1 L857.9 630.0 L858.7 626.5 L859.5 630.0 L860.4 630.8 L861.7 629.0 L862.5 634.0 L863.3 634.5 L864.0 638.4 L864.8 643.6 L865.6 649.2 L866.5 636.7 L867.5 626.2 L868.5 629.3 L869.4 636.7 L870.4 633.3 L871.3 630.1 L872.3 626.2 L873.3 618.9 L874.2 609.8 L875.2 611.3 L876.2 610.8 L877.1 616.9 L878.1 620.2 L879.0 622.3 L880.0 620.0 L881.0 620.9 L881.9 621.3 L882.9 622.2 L883.8 626.2 L884.8 631.3 L885.8 639.5 L886.7 646.3 L887.7 643.5 L888.7 641.3 L889.6 637.7 L890.6 633.9 L891.5 634.8 L892.5 642.1 L893.5 653.1 L894.4 664.6 L895.4 676.2 L896.3 685.5 L897.3 695.4 L898.1 696.5 L898.8 698.4 L899.6 698.9 L900.4 702.6 L901.2 703.1 L902.1 697.5 L903.1 690.8 L904.0 684.8 L905.0 685.4 L906.0 687.8 L906.9 689.6 L907.7 693.7 L908.5 702.8 L909.2 711.6 L910.0 716.6 L910.8 726.2 L911.7 723.2 L912.7 720.0 L913.7 716.5 L914.5 717.0 L915.3 721.3 L916.1 723.8 L916.9 727.5 L917.7 730.3 L918.5 731.9 L919.4 722.9 L920.4 712.7 L921.3 705.0 L922.3 707.3 L923.3 710.0 L924.2 712.7 L925.2 712.8 L926.2 710.8 L927.1 713.8 L928.1 714.8 L929.0 718.5 L930.0 712.6 L931.0 710.2 L931.9 706.9 L932.9 708.7 L933.8 712.7 L935.0 690.6 L935.4 747.3 L936.7 714.6 L937.7 713.9 L938.7 716.4 L939.6 717.5 L940.4 719.6 L941.2 723.4 L941.9 726.9 L942.7 728.4 L943.5 731.9 L944.4 729.4 L945.4 719.9 L946.3 714.6 L947.1 714.3 L947.9 711.0 L948.7 710.5 L949.4 703.7 L950.2 705.0 L951.2 697.1 L952.1 691.5 L953.1 674.6 L954.0 657.8 L955.0 639.6 L956.0 651.5 L956.9 656.9 L957.9 650.0 L958.8 644.1 L959.8 634.8 L960.8 636.9 L961.7 638.2 L962.7 637.7 L963.5 641.0 L964.3 642.6 L965.1 646.1 L965.9 646.3 L966.7 652.3 L967.5 653.1 L968.5 654.8 L969.4 659.9 L970.4 662.7 L971.2 667.8 L971.9 666.2 L972.7 668.5 L973.5 672.1 L974.2 672.3 L975.4 675.8 L976.2 676.2 L976.9 675.3 L977.7 676.9 L978.5 675.4 L979.2 673.9 L980.0 671.2 L980.6 681.5 L981.3 680.3 L982.1 675.8 L982.9 674.6 L983.5 685.0 L984.6 656.2 L985.8 674.6 L986.9 678.1 L988.1 696.5 L988.7 651.5 L989.8 622.7 L990.8 623.8 L991.7 622.1 L992.7 618.1 L993.5 618.9 L994.2 620.0 L995.0 620.4 L995.8 616.5 L996.5 616.0 L997.3 610.6 L998.1 610.9 L998.8 614.3 L999.6 614.6 L1000.8 619.2 L1001.5 616.2 L1002.3 613.6 L1003.1 612.3 L1003.8 608.8 L1004.6 605.1 L1005.4 598.5 L1006.2 596.7 L1007.1 595.0 L1007.1 589.8 L1008.1 554.5 L1009.1 521.2 L1010.1 506.3 L1011.1 489.0 L1011.9 483.8 L1012.7 479.3 L1013.4 476.1 L1014.2 468.8 L1015.2 462.4 L1016.2 452.6 L1017.2 447.8 L1018.2 444.6 L1019.2 445.8 L1020.2 440.5 L1021.2 432.5 L1022.2 428.4 L1023.2 424.4 L1024.3 410.3 L1025.3 414.5 L1026.3 416.3 L1027.3 405.1 L1028.3 395.7 L1029.0 395.3 L1029.8 392.3 L1030.6 397.2 L1031.3 394.1 L1032.1 396.6 L1032.8 393.1 L1033.6 393.1 L1034.3 395.7 L1035.4 397.0 L1036.4 403.2 L1037.4 405.5 L1038.4 404.2 L1039.1 404.5 L1039.9 406.1 L1040.7 406.8 L1041.4 408.2 L1042.4 400.2 L1043.2 401.0 L1043.9 400.6 L1044.7 403.2 L1045.4 404.2 L1046.2 405.1 L1047.0 410.2 L1047.7 413.8 L1048.5 416.3 L1049.3 418.6 L1050.1 419.2 L1050.9 419.8 L1051.7 423.0 L1052.5 424.4 L1053.3 426.7 L1054.0 432.8 L1054.8 434.6 L1055.5 436.5 L1056.5 448.6 L1057.3 448.9 L1058.1 448.9 L1058.8 449.1 L1059.6 450.6 L1060.6 455.3 L1061.6 462.7 L1062.3 460.2 L1063.1 459.1 L1063.9 457.4 L1064.6 454.7 L1065.6 456.5 L1066.6 456.7 L1067.6 454.3 L1068.6 445.6 L1069.7 454.1 L1070.7 464.7 L1071.7 458.7 L1072.7 452.6 L1073.7 472.8 L1074.7 465.9 L1075.7 452.6 L1076.5 467.0 L1077.3 486.9 L1077.3 859 L294.6 859 Z" fill="#008000" fill-opacity="0.3"/>
<path d="M294.6 492.1 L295.8 581.5 L296.7 535.0 L297.7 489.2 L298.5 487.7 L299.2 484.3 L300.0 481.8 L300.8 478.6 L301.5 477.7 L302.3 484.4 L303.1 493.5 L303.9 499.5 L304.7 507.5 L305.5 513.3 L306.3 520.0 L307.2 524.4 L308.0 528.0 L308.8 531.5 L309.7 534.8 L310.6 544.4 L311.5 548.8 L312.3 541.9 L313.1 533.5 L313.8 534.6 L314.6 531.7 L315.4 532.0 L316.2 533.7 L316.9 535.4 L317.7 533.3 L318.5 533.1 L319.2 531.2 L320.0 530.7 L320.8 527.6 L321.5 527.6 L322.3 525.8 L323.1 534.7 L323.8 541.4 L324.6 550.8 L325.6 556.2 L326.5 556.5 L327.5 554.2 L328.5 551.9 L329.4 546.9 L330.4 548.9 L331.3 552.7 L332.2 543.9 L333.0 536.8 L333.8 529.6 L334.7 533.3 L335.6 538.3 L336.5 541.2 L337.3 546.8 L338.1 551.1 L338.8 555.6 L339.6 562.3 L340.4 566.3 L341.2 573.8 L342.1 575.5 L342.9 581.5 L343.7 586.4 L344.6 591.2 L345.4 595.0 L346.7 614.2 L347.7 615.2 L348.7 620.7 L349.6 623.8 L350.4 629.0 L351.2 627.2 L351.9 633.5 L352.8 631.5 L353.7 630.4 L354.5 627.9 L355.4 627.7 L356.2 627.0 L357.1 624.7 L358.0 621.2 L358.8 621.9 L359.7 626.2 L360.5 629.1 L361.4 632.6 L362.2 636.4 L363.1 637.3 L363.8 636.7 L364.6 635.2 L365.4 631.9 L366.2 633.6 L366.9 631.5 L367.7 632.9 L368.5 635.5 L369.2 636.6 L370.0 639.3 L370.8 643.1 L371.6 644.7 L372.5 649.8 L373.4 647.2 L374.2 652.7 L375.0 648.1 L375.9 648.2 L376.7 647.6 L377.5 643.1 L378.3 644.6 L379.1 641.5 L379.9 641.8 L380.7 646.2 L381.5 645.2 L382.3 646.9 L383.1 645.0 L383.8 647.9 L384.6 647.9 L385.4 646.2 L386.2 646.1 L386.9 646.1 L387.7 647.6 L388.5 645.0 L389.3 646.8 L390.2 646.7 L391.0 643.5 L391.7 639.5 L392.5 634.6 L393.7 648.5 L394.6 648.8 L395.6 655.8 L396.5 656.5 L397.5 656.4 L398.5 654.3 L399.4 651.9 L400.4 646.3 L401.3 645.6 L402.3 643.8 L403.2 647.4 L404.0 648.5 L404.8 641.9 L405.6 640.5 L406.3 636.9 L407.3 637.1 L408.3 632.3 L409.2 632.9 L410.2 634.3 L411.2 631.8 L412.1 630.0 L413.1 631.7 L414.0 634.3 L415.0 635.8 L416.0 641.0 L416.9 644.4 L417.9 648.5 L418.7 650.2 L419.6 648.5 L420.6 644.0 L421.5 640.9 L422.5 638.1 L423.3 635.0 L424.0 628.9 L424.8 624.2 L425.6 619.7 L426.4 619.2 L427.2 616.7 L428.0 610.6 L428.8 608.1 L429.8 608.7 L430.8 613.3 L431.7 616.2 L432.5 613.0 L433.3 609.9 L434.0 609.6 L434.8 603.1 L435.6 603.6 L436.3 598.8 L437.2 596.9 L438.1 597.7 L438.9 599.8 L439.8 598.8 L440.6 597.1 L441.3 593.2 L442.1 588.5 L443.1 588.6 L444.0 587.9 L445.0 587.3 L445.8 590.6 L446.5 594.3 L447.3 596.5 L448.1 599.0 L448.8 602.3 L449.6 604.6 L450.4 610.9 L451.2 615.4 L451.9 620.8 L452.7 625.0 L453.5 627.8 L454.2 630.0 L454.8 639.2 L455.6 641.1 L456.3 637.4 L457.1 635.8 L458.1 636.3 L459.0 637.5 L460.0 639.2 L460.8 640.6 L461.5 643.3 L462.3 642.8 L463.1 645.2 L463.8 648.7 L464.6 647.3 L465.5 642.1 L466.3 641.6 L467.2 641.6 L468.1 639.2 L468.8 641.4 L469.6 642.7 L470.4 643.8 L471.2 642.0 L471.9 642.5 L472.7 640.4 L473.5 643.9 L474.2 645.8 L475.0 649.6 L475.8 650.9 L476.5 646.3 L477.3 643.8 L478.2 644.5 L479.0 646.6 L479.9 647.8 L480.8 649.6 L481.6 648.3 L482.5 643.9 L483.4 645.1 L484.2 646.1 L485.1 641.6 L486.0 642.1 L486.8 645.2 L487.7 648.5 L488.5 650.7 L489.2 651.3 L490.0 650.8 L490.9 657.6 L491.7 660.0 L492.7 655.9 L493.6 656.4 L494.6 655.4 L495.6 662.9 L496.5 672.5 L497.5 679.6 L498.6 664.6 L499.8 679.6 L500.7 675.5 L501.5 664.9 L502.4 663.9 L503.3 656.5 L504.1 650.6 L505.0 650.1 L505.9 643.0 L506.7 641.5 L507.6 645.5 L508.5 650.8 L509.3 652.6 L510.2 656.5 L511.1 655.1 L511.9 653.1 L512.9 659.3 L513.8 663.3 L514.8 668.1 L515.7 649.5 L516.5 631.2 L517.3 636.1 L518.1 638.1 L518.8 639.2 L519.8 639.2 L520.8 643.2 L521.7 640.4 L522.7 642.9 L523.6 650.2 L524.6 653.1 L525.5 647.8 L526.3 643.5 L527.2 639.4 L528.1 633.5 L528.9 635.2 L529.8 637.3 L530.7 635.5 L531.5 639.2 L532.3 636.3 L533.1 638.8 L533.8 635.8 L534.6 636.5 L535.5 636.0 L536.3 636.4 L537.2 641.5 L538.1 640.6 L538.8 641.9 L539.6 643.2 L540.4 641.2 L541.2 644.4 L542.1 650.4 L542.9 653.2 L543.7 654.2 L544.5 659.8 L545.3 663.8 L546.2 664.2 L547.1 662.1 L548.1 665.0 L549.0 661.9 L549.9 647.8 L550.8 630.8 L551.6 628.8 L552.5 627.3 L553.4 627.8 L554.2 634.2 L555.0 642.1 L555.8 645.6 L556.5 651.5 L557.4 652.4 L558.3 655.6 L559.1 657.3 L560.0 658.5 L560.8 656.9 L561.5 649.2 L562.3 646.9 L563.1 650.9 L563.9 653.8 L564.7 656.0 L565.5 655.9 L566.3 658.5 L567.3 655.4 L568.3 656.1 L569.2 652.7 L570.2 652.5 L571.2 652.1 L572.1 651.5 L572.9 654.4 L573.7 652.7 L574.4 653.8 L575.2 652.6 L576.0 657.1 L576.7 659.6 L577.7 660.7 L578.7 668.5 L579.6 671.2 L580.5 667.3 L581.3 661.6 L582.2 658.2 L583.1 653.8 L583.8 658.2 L584.6 660.1 L585.4 663.1 L586.2 661.8 L586.9 656.4 L587.7 654.8 L588.5 652.2 L589.2 649.1 L590.0 643.5 L590.8 643.6 L591.5 647.1 L592.3 646.9 L593.2 642.7 L594.0 642.4 L594.9 639.7 L595.8 641.2 L596.6 643.3 L597.5 640.5 L598.4 642.9 L599.2 643.5 L600.1 645.5 L601.0 648.0 L601.8 649.5 L602.7 652.7 L603.5 652.3 L604.2 653.8 L605.0 650.4 L605.8 648.5 L606.5 647.3 L607.3 644.6 L608.2 644.7 L609.0 641.4 L609.9 638.4 L610.8 638.8 L611.5 639.2 L612.3 642.8 L613.1 642.3 L613.8 638.7 L614.6 639.1 L615.4 638.8 L616.2 644.2 L616.9 647.7 L617.7 650.4 L618.5 657.3 L619.2 665.4 L620.0 671.2 L620.9 672.6 L621.7 671.7 L622.6 672.3 L623.5 675.8 L624.3 673.4 L625.2 674.3 L626.1 670.6 L626.9 670.0 L627.8 669.5 L628.7 670.6 L629.5 670.3 L630.4 673.5 L631.1 675.6 L631.9 676.3 L632.7 680.4 L633.6 676.9 L634.4 672.3 L635.2 670.6 L636.0 675.9 L636.7 676.9 L637.6 673.9 L638.5 672.9 L639.3 671.0 L640.1 676.0 L640.9 675.6 L641.7 673.8 L642.5 678.1 L643.4 673.6 L644.2 672.2 L645.1 667.9 L646.0 665.4 L646.9 668.9 L647.9 671.1 L648.8 672.3 L649.8 672.5 L650.8 671.3 L651.7 670.0 L652.5 674.7 L653.3 676.4 L654.0 678.1 L655.0 675.3 L656.0 668.0 L656.9 667.7 L657.8 673.1 L658.6 677.7 L659.5 679.4 L660.4 683.8 L661.2 683.1 L662.1 686.8 L663.0 681.2 L663.8 683.8 L664.6 686.9 L665.4 691.7 L666.1 690.8 L666.9 686.7 L667.7 686.4 L668.5 682.7 L669.2 688.6 L670.0 688.7 L670.8 691.9 L671.5 685.1 L672.3 677.9 L673.1 668.8 L673.8 669.4 L674.6 672.6 L675.4 675.1 L676.1 677.8 L676.9 678.4 L677.7 680.4 L678.7 674.3 L679.6 668.8 L680.6 672.3 L681.5 678.3 L682.5 683.8 L683.4 674.8 L684.2 663.1 L685.1 662.4 L686.0 661.3 L686.8 663.2 L687.7 667.7 L688.5 670.6 L689.3 679.2 L690.1 681.9 L690.9 685.3 L691.7 688.5 L692.5 686.0 L693.3 690.9 L694.0 690.8 L694.9 685.7 L695.8 679.2 L696.6 685.8 L697.5 687.3 L698.7 687.3 L699.6 692.6 L700.6 696.4 L701.5 701.2 L702.3 698.1 L703.1 690.5 L703.8 689.6 L704.6 691.2 L705.4 690.1 L706.2 689.6 L707.0 678.8 L707.9 670.0 L708.7 676.2 L709.4 681.2 L710.2 682.7 L711.2 680.2 L712.1 680.9 L713.1 681.5 L713.9 691.2 L714.8 700.0 L715.8 698.7 L716.7 696.3 L717.7 695.4 L718.5 691.8 L719.3 694.4 L720.1 690.7 L720.9 685.3 L721.7 685.0 L722.7 678.0 L723.7 677.6 L724.6 670.0 L725.6 669.2 L726.5 668.1 L727.5 663.1 L728.3 665.0 L729.1 663.2 L729.9 665.5 L730.7 662.6 L731.5 666.5 L732.3 667.7 L733.1 671.1 L733.8 673.5 L734.6 676.2 L735.4 676.2 L736.2 679.0 L736.9 681.8 L737.7 683.6 L738.5 685.0 L739.4 685.2 L740.4 683.8 L741.3 682.7 L742.1 680.7 L742.9 680.8 L743.7 678.1 L744.5 683.3 L745.4 688.5 L746.2 685.2 L747.1 683.5 L748.0 682.4 L748.8 680.4 L749.6 679.4 L750.4 679.1 L751.2 678.1 L752.0 672.0 L752.9 666.2 L753.7 659.7 L754.6 653.8 L754.6 653.8 L755.4 641.2 L756.2 632.9 L756.9 623.1 L757.7 611.4 L758.5 600.0 L759.2 594.7 L760.0 590.7 L760.8 583.6 L761.5 577.2 L762.3 575.0 L763.3 578.0 L764.2 580.8 L765.2 580.0 L766.2 583.2 L767.1 582.7 L768.1 579.1 L769.0 578.8 L770.0 578.5 L771.0 584.6 L771.7 579.6 L772.5 580.1 L773.3 573.7 L774.0 568.7 L774.8 567.3 L775.8 584.6 L776.7 574.8 L777.7 567.3 L778.7 561.4 L779.6 553.8 L780.6 553.6 L781.5 551.9 L782.3 533.9 L783.1 515.4 L783.8 518.3 L784.6 517.7 L785.4 517.3 L786.3 517.8 L787.3 518.3 L788.3 536.0 L789.2 551.9 L790.0 559.8 L790.8 564.1 L791.5 569.6 L792.3 571.8 L793.1 578.8 L794.0 578.0 L795.0 578.7 L796.0 576.9 L796.9 585.5 L797.9 596.5 L798.8 603.8 L799.8 603.8 L800.8 601.9 L801.7 589.8 L802.7 575.0 L803.5 565.1 L804.2 555.8 L805.6 565.4 L806.5 593.6 L807.5 615.4 L808.5 620.1 L809.4 621.2 L810.3 629.8 L811.1 639.2 L811.9 648.1 L812.7 641.7 L813.6 628.3 L814.4 620.5 L815.2 609.6 L816.2 617.5 L817.1 622.4 L818.1 628.8 L818.8 640.6 L819.6 656.1 L820.4 669.8 L821.2 684.4 L821.9 696.2 L822.9 680.8 L823.8 673.0 L824.8 662.9 L825.8 653.8 L826.7 657.0 L827.7 657.7 L828.7 654.7 L829.6 650.3 L830.6 646.2 L831.5 654.6 L832.5 662.5 L833.5 671.2 L834.4 668.3 L835.4 663.5 L836.2 671.0 L836.9 681.7 L838.3 619.2 L839.2 616.4 L840.2 615.4 L841.0 609.6 L841.7 601.7 L842.5 597.4 L843.3 589.3 L844.0 586.5 L845.0 593.2 L846.0 601.9 L846.7 603.9 L847.5 605.1 L848.3 605.3 L849.0 606.2 L849.8 607.7 L850.6 609.0 L851.3 617.4 L852.1 618.9 L852.9 623.2 L853.7 625.0 L854.5 624.4 L855.3 626.2 L856.2 624.4 L857.0 629.1 L857.9 630.0 L858.7 626.5 L859.5 630.0 L860.4 630.8 L861.7 629.0 L862.5 634.0 L863.3 634.5 L864.0 638.4 L864.8 643.6 L865.6 649.2 L866.5 636.7 L867.5 626.2 L868.5 629.3 L869.4 636.7 L870.4 633.3 L871.3 630.1 L872.3 626.2 L873.3 618.9 L874.2 609.8 L875.2 611.3 L876.2 610.8 L877.1 616.9 L878.1 620.2 L879.0 622.3 L880.0 620.0 L881.0 620.9 L881.9 621.3 L882.9 622.2 L883.8 626.2 L884.8 631.3 L885.8 639.5 L886.7 646.3 L887.7 643.5 L888.7 641.3 L889.6 637.7 L890.6 633.9 L891.5 634.8 L892.5 642.1 L893.5 653.1 L894.4 664.6 L895.4 676.2 L896.3 685.5 L897.3 695.4 L898.1 696.5 L898.8 698.4 L899.6 698.9 L900.4 702.6 L901.2 703.1 L902.1 697.5 L903.1 690.8 L904.0 684.8 L905.0 685.4 L906.0 687.8 L906.9 689.6 L907.7 693.7 L908.5 702.8 L909.2 711.6 L910.0 716.6 L910.8 726.2 L911.7 723.2 L912.7 720.0 L913.7 716.5 L914.5 717.0 L915.3 721.3 L916.1 723.8 L916.9 727.5 L917.7 730.3 L918.5 731.9 L919.4 722.9 L920.4 712.7 L921.3 705.0 L922.3 707.3 L923.3 710.0 L924.2 712.7 L925.2 712.8 L926.2 710.8 L927.1 713.8 L928.1 714.8 L929.0 718.5 L930.0 712.6 L931.0 710.2 L931.9 706.9 L932.9 708.7 L933.8 712.7 L935.0 690.6 L935.4 747.3 L936.7 714.6 L937.7 713.9 L938.7 716.4 L939.6 717.5 L940.4 719.6 L941.2 723.4 L941.9 726.9 L942.7 728.4 L943.5 731.9 L944.4 729.4 L945.4 719.9 L946.3 714.6 L947.1 714.3 L947.9 711.0 L948.7 710.5 L949.4 703.7 L950.2 705.0 L951.2 697.1 L952.1 691.5 L953.1 674.6 L954.0 657.8 L955.0 639.6 L956.0 651.5 L956.9 656.9 L957.9 650.0 L958.8 644.1 L959.8 634.8 L960.8 636.9 L961.7 638.2 L962.7 637.7 L963.5 641.0 L964.3 642.6 L965.1 646.1 L965.9 646.3 L966.7 652.3 L967.5 653.1 L968.5 654.8 L969.4 659.9 L970.4 662.7 L971.2 667.8 L971.9 666.2 L972.7 668.5 L973.5 672.1 L974.2 672.3 L975.4 675.8 L976.2 676.2 L976.9 675.3 L977.7 676.9 L978.5 675.4 L979.2 673.9 L980.0 671.2 L980.6 681.5 L981.3 680.3 L982.1 675.8 L982.9 674.6 L983.5 685.0 L984.6 656.2 L985.8 674.6 L986.9 678.1 L988.1 696.5 L988.7 651.5 L989.8 622.7 L990.8 623.8 L991.7 622.1 L992.7 618.1 L993.5 618.9 L994.2 620.0 L995.0 620.4 L995.8 616.5 L996.5 616.0 L997.3 610.6 L998.1 610.9 L998.8 614.3 L999.6 614.6 L1000.8 619.2 L1001.5 616.2 L1002.3 613.6 L1003.1 612.3 L1003.8 608.8 L1004.6 605.1 L1005.4 598.5 L1006.2 596.7 L1007.1 595.0 L1007.1 589.8 L1008.1 554.5 L1009.1 521.2 L1010.1 506.3 L1011.1 489.0 L1011.9 483.8 L1012.7 479.3 L1013.4 476.1 L1014.2 468.8 L1015.2 462.4 L1016.2 452.6 L1017.2 447.8 L1018.2 444.6 L1019.2 445.8 L1020.2 440.5 L1021.2 432.5 L1022.2 428.4 L1023.2 424.4 L1024.3 410.3 L1025.3 414.5 L1026.3 416.3 L1027.3 405.1 L1028.3 395.7 L1029.0 395.3 L1029.8 392.3 L1030.6 397.2 L1031.3 394.1 L1032.1 396.6 L1032.8 393.1 L1033.6 393.1 L1034.3 395.7 L1035.4 397.0 L1036.4 403.2 L1037.4 405.5 L1038.4 404.2 L1039.1 404.5 L1039.9 406.1 L1040.7 406.8 L1041.4 408.2 L1042.4 400.2 L1043.2 401.0 L1043.9 400.6 L1044.7 403.2 L1045.4 404.2 L1046.2 405.1 L1047.0 410.2 L1047.7 413.8 L1048.5 416.3 L1049.3 418.6 L1050.1 419.2 L1050.9 419.8 L1051.7 423.0 L1052.5 424.4 L1053.3 426.7 L1054.0 432.8 L1054.8 434.6 L1055.5 436.5 L1056.5 448.6 L1057.3 448.9 L1058.1 448.9 L1058.8 449.1 L1059.6 450.6 L1060.6 455.3 L1061.6 462.7 L1062.3 460.2 L1063.1 459.1 L1063.9 457.4 L1064.6 454.7 L1065.6 456.5 L1066.6 456.7 L1067.6 454.3 L1068.6 445.6 L1069.7 454.1 L1070.7 464.7 L1071.7 458.7 L1072.7 452.6 L1073.7 472.8 L1074.7 465.9 L1075.7 452.6 L1076.5 467.0 L1077.3 486.9" fill="none" stroke="#0a800a" stroke-width="2.3" stroke-linejoin="round"/>
<path d="M294.5 370.0 V859.5 H1077.5" fill="none" stroke="#555" stroke-width="1.3"/>
<text x="294.5" y="343.3" font-family="Liberation Sans" font-size="16" font-weight="bold" fill="#222">Altimetric Profile</text>
<text x="278.5" y="376.30" font-family="Liberation Sans" font-size="16" fill="#555" text-anchor="end">160</text>
<text x="278.5" y="498.55" font-family="Liberation Sans" font-size="16" fill="#555" text-anchor="end">140</text>
<text x="278.5" y="620.80" font-family="Liberation Sans" font-size="16" fill="#555" text-anchor="end">120</text>
<text x="278.5" y="743.05" font-family="Liberation Sans" font-size="16" fill="#555" text-anchor="end">100</text>
<text x="278.5" y="865.30" font-family="Liberation Sans" font-size="16" fill="#555" text-anchor="end">80</text>
<text x="311.2" y="883.5" font-family="Liberation Sans" font-size="16" fill="#555" text-anchor="middle">1</text>
<text x="487.2" y="883.5" font-family="Liberation Sans" font-size="16" fill="#555" text-anchor="middle">10</text>
<text x="663.2" y="883.5" font-family="Liberation Sans" font-size="16" fill="#555" text-anchor="middle">19</text>
<text x="839.2" y="883.5" font-family="Liberation Sans" font-size="16" fill="#555" text-anchor="middle">28</text>
<text x="1015.2" y="883.5" font-family="Liberation Sans" font-size="16" fill="#555" text-anchor="middle">37</text>
<text x="686.5" y="953.6" font-family="Liberation Sans" font-size="16" font-style="italic" fill="#333" text-anchor="middle">Distance</text>
<text transform="translate(157.3 615) rotate(-90)" x="0" y="0" font-family="Liberation Sans" font-size="16" font-style="italic" fill="#333" text-anchor="middle">Altitude</text>
<rect x="1094" y="371" width="15.5" height="15.3" fill="#008000"/>
<text x="1115.5" y="385.3" font-family="Liberation Sans" font-size="16" fill="#3a3a3a">Altitude(m)</text>
</svg>
<div class="a" style="left:4px;top:997px;width:1592px;height:38.7px;background:#eeeeee;border-top:1px solid #d6d6d6"></div>
<div class="a" style="left:54.6px;top:1008.3px;width:11.7px;height:1.9px;background:#4a4a4a;border-radius:0.5px"></div>
<div class="a" style="left:54.6px;top:1011.3px;width:11.7px;height:1.9px;background:#4a4a4a;border-radius:0.5px"></div>
<div class="a" style="left:54.6px;top:1014.3px;width:11.7px;height:1.9px;background:#4a4a4a;border-radius:0.5px"></div>
<div class="a" style="left:54.6px;top:1017.3px;width:11.7px;height:1.9px;background:#4a4a4a;border-radius:0.5px"></div>
<div class="a" style="left:89.5px;top:998px;width:56.7px;height:28.5px;background:#e6e6e6;border:1px solid #d2d2d2;border-top:none;border-radius:0 0 2px 2px"></div>
<div class="t" style="left:97.0px;top:1004.2px;font-size:13px;color:#555">Data</div>
<svg class="a" style="left:131.9px;top:1009.3px" width="7.2" height="4" viewBox="0 0 7.2 4"><path d="M0 0H7.2L3.6 4Z" fill="#8a8a8a"/></svg>
<div class="a" style="left:147.3px;top:998px;width:77.2px;height:28.5px;background:#e6e6e6;border:1px solid #d2d2d2;border-top:none;border-radius:0 0 2px 2px"></div>
<div class="t" style="left:154.8px;top:1004.2px;font-size:13px;color:#555">Analysis</div>
<svg class="a" style="left:210.2px;top:1009.3px" width="7.2" height="4" viewBox="0 0 7.2 4"><path d="M0 0H7.2L3.6 4Z" fill="#8a8a8a"/></svg>
<div class="a" style="left:225.6px;top:998px;width:149.7px;height:28.5px;background:#e6e6e6;border:1px solid #d2d2d2;border-top:none;border-radius:0 0 2px 2px"></div>
<div class="t" style="left:233.1px;top:1004.2px;font-size:13px;color:#555">Accelerator Variation</div>
<svg class="a" style="left:361.0px;top:1009.3px" width="7.2" height="4" viewBox="0 0 7.2 4"><path d="M0 0H7.2L3.6 4Z" fill="#8a8a8a"/></svg>
<div class="a" style="left:376.4px;top:996.5px;width:122.0px;height:31.5px;background:#fff;border:1px solid #cfcfcf;border-top:none;border-radius:0 0 2px 2px;box-shadow:0 1px 1px rgba(0,0,0,0.08)"></div>
<div class="t" style="left:382.7px;top:1002.5px;font-size:13px;color:#222">Altimetric Profile</div>
<svg class="a" style="left:484.1px;top:1008.8px" width="7.2" height="4" viewBox="0 0 7.2 4"><path d="M0 0H7.2L3.6 4Z" fill="#8a8a8a"/></svg>
<div class="a" style="left:500px;top:998px;width:62.5px;height:28.5px;background:#e6e6e6;border:1px solid #d2d2d2;border-top:none;border-radius:0 0 2px 2px"></div>
<div class="t" style="left:507.5px;top:1004.2px;font-size:13px;color:#555">Brake</div>
<svg class="a" style="left:548.2px;top:1009.3px" width="7.2" height="4" viewBox="0 0 7.2 4"><path d="M0 0H7.2L3.6 4Z" fill="#8a8a8a"/></svg>
<div class="a" style="left:564px;top:998px;width:92.3px;height:28.5px;background:#e6e6e6;border:1px solid #d2d2d2;border-top:none;border-radius:0 0 2px 2px"></div>
<div class="t" style="left:571.5px;top:1004.2px;font-size:13px;color:#555">Brake Map</div>
<svg class="a" style="left:642.0px;top:1009.3px" width="7.2" height="4" viewBox="0 0 7.2 4"><path d="M0 0H7.2L3.6 4Z" fill="#8a8a8a"/></svg>
<div class="a" style="left:657.8px;top:998px;width:54.7px;height:28.5px;background:#e6e6e6;border:1px solid #d2d2d2;border-top:none;border-radius:0 0 2px 2px"></div>
<div class="t" style="left:665.3px;top:1004.2px;font-size:13px;color:#555">Calc</div>
<svg class="a" style="left:698.2px;top:1009.3px" width="7.2" height="4" viewBox="0 0 7.2 4"><path d="M0 0H7.2L3.6 4Z" fill="#8a8a8a"/></svg>
<div class="a" style="left:714px;top:998px;width:103.2px;height:28.5px;background:#e6e6e6;border:1px solid #d2d2d2;border-top:none;border-radius:0 0 2px 2px"></div>
<div class="t" style="left:721.5px;top:1004.2px;font-size:13px;color:#555">Current Flow</div>
<svg class="a" style="left:802.9px;top:1009.3px" width="7.2" height="4" viewBox="0 0 7.2 4"><path d="M0 0H7.2L3.6 4Z" fill="#8a8a8a"/></svg>
<div class="a" style="left:818.3px;top:998px;width:153.0px;height:28.5px;background:#e6e6e6;border:1px solid #d2d2d2;border-top:none;border-radius:0 0 2px 2px"></div>
<div class="t" style="left:825.8px;top:1004.2px;font-size:13px;color:#555">Current while Braking</div>
<svg class="a" style="left:957.0px;top:1009.3px" width="7.2" height="4" viewBox="0 0 7.2 4"><path d="M0 0H7.2L3.6 4Z" fill="#8a8a8a"/></svg>
<div class="a" style="left:972.5px;top:998px;width:159.4px;height:28.5px;background:#e6e6e6;border:1px solid #d2d2d2;border-top:none;border-radius:0 0 2px 2px"></div>
<div class="t" style="left:980.0px;top:1004.2px;font-size:13px;color:#555">Current while Coasting</div>
<svg class="a" style="left:1117.6px;top:1009.3px" width="7.2" height="4" viewBox="0 0 7.2 4"><path d="M0 0H7.2L3.6 4Z" fill="#8a8a8a"/></svg>
<div class="a" style="left:1133px;top:998px;width:108.3px;height:28.5px;background:#e6e6e6;border:1px solid #d2d2d2;border-top:none;border-radius:0 0 2px 2px"></div>
<div class="t" style="left:1140.5px;top:1004.2px;font-size:13px;color:#555">Driving Errors</div>
<svg class="a" style="left:1227.0px;top:1009.3px" width="7.2" height="4" viewBox="0 0 7.2 4"><path d="M0 0H7.2L3.6 4Z" fill="#8a8a8a"/></svg>
<div class="a" style="left:1242.6px;top:998px;width:45px;height:28.5px;background:#e6e6e6;border-left:1px solid #d2d2d2;border-bottom:1px solid #d2d2d2;overflow:hidden"><div class="t" style="left:6.4px;top:6.2px;font-size:13px;color:#555">Driving Data</div></div>
<div class="a" style="left:1279px;top:997.5px;width:6px;height:38px;background:linear-gradient(90deg,rgba(230,230,230,0),#dcdcdc)"></div>
<div class="a" style="left:1284.6px;top:998px;width:97px;height:37.5px;background:#efefef"></div>
<svg class="a" style="left:1299.5px;top:1008px" width="6.5" height="10.5" viewBox="0 0 6.5 10.5"><path d="M6.5 0V10.5L0 5.25Z" fill="#555"/></svg>
<svg class="a" style="left:1330.3px;top:1008px" width="6.5" height="10.5" viewBox="0 0 6.5 10.5"><path d="M0 0V10.5L6.5 5.25Z" fill="#555"/></svg>
<div class="a" style="left:1381.3px;top:998px;width:51px;height:37.5px;background:#f1f1f1;border-left:1px solid #d9d9d9;border-right:1px solid #d9d9d9"></div>
<svg class="a" style="left:1400.5px;top:1009.5px" width="13" height="13" viewBox="0 0 13 13"><circle cx="6.5" cy="6.5" r="6" fill="#16a05a"/><path d="M3.4 6.6 L5.6 8.8 L9.6 4.4" stroke="#fff" stroke-width="1.8" fill="none"/></svg>
</body></html>
